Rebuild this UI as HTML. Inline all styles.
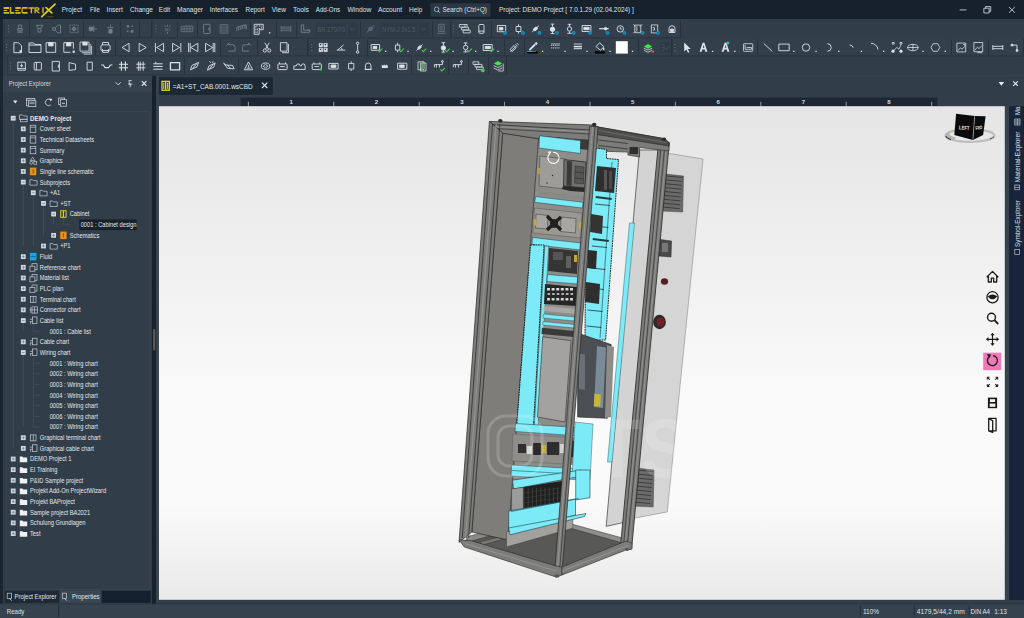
<!DOCTYPE html>
<html><head><meta charset="utf-8"><style>
html,body{margin:0;padding:0;width:1024px;height:618px;overflow:hidden;background:#313d49}
svg{display:block;font-family:"Liberation Sans",sans-serif}
</style></head><body>
<svg width="1024" height="618" viewBox="0 0 1024 618">
<rect x="0" y="0" width="1024" height="618" fill="#313d49" />
<rect x="0" y="0" width="1024" height="19" fill="#17212c" />
<rect x="0" y="19" width="3" height="599" fill="#1c2631" />
<g fill="#d4bd16">
<path d="M3.6,7h5.4v2h-5.4zM3.6,9.9h3.4v1.1h-3.4zM3.6,12h5.4v1.7h-5.4z"/>
<path d="M9.8,7h1.4v5h3.1v1.7h-4.5z"/>
<path d="M15.3,7h5.4v2h-5.4zM15.3,9.9h3.4v1.1h-3.4zM15.3,12h5.4v1.7h-5.4z"/>
<path d="M23.2,7h4.3v1.7h-4h-0.8v3.3h4.8v1.7h-4.3a1.9,1.9 0 0 1 -1.7,-1.9v-2.9a1.9,1.9 0 0 1 1.7,-1.9z"/>
<path d="M28.5,7.2h5.5v1.5h-1.9v4.6h-1.4v-4.6h-2.2z"/>
<path d="M34.4,7.2h3.3a1.7,1.7 0 0 1 0,3.6h-0.3l2.9,2.5h-2l-2.6,-2.5v2.5h-1.3zM35.7,8.5v1.1h1.9a0.55,0.55 0 0 0 0,-1.1z"/>
<path d="M42.3,7.2h1.4v6.1h-1.4z"/>
</g>
<path d="M55,4.2L41.8,16.7M46,7.6L51.8,12.8" stroke="#e2cb10" stroke-width="1.8" stroke-linecap="round"/>
<rect x="47.4" y="16.2" width="6" height="1" fill="#5a5220"/>
<text x="61.80" y="12.10" font-size="7.4" fill="#dfe4e9" textLength="20.20" lengthAdjust="spacingAndGlyphs" >Project</text>
<text x="90.00" y="12.10" font-size="7.4" fill="#dfe4e9" textLength="9.80" lengthAdjust="spacingAndGlyphs" >File</text>
<text x="106.60" y="12.10" font-size="7.4" fill="#dfe4e9" textLength="16.10" lengthAdjust="spacingAndGlyphs" >Insert</text>
<text x="130.00" y="12.10" font-size="7.4" fill="#dfe4e9" textLength="23.00" lengthAdjust="spacingAndGlyphs" >Change</text>
<text x="158.80" y="12.10" font-size="7.4" fill="#dfe4e9" textLength="11.20" lengthAdjust="spacingAndGlyphs" >Edit</text>
<text x="177.00" y="12.10" font-size="7.4" fill="#dfe4e9" textLength="26.00" lengthAdjust="spacingAndGlyphs" >Manager</text>
<text x="209.80" y="12.10" font-size="7.4" fill="#dfe4e9" textLength="28.10" lengthAdjust="spacingAndGlyphs" >Interfaces</text>
<text x="245.50" y="12.10" font-size="7.4" fill="#dfe4e9" textLength="19.30" lengthAdjust="spacingAndGlyphs" >Report</text>
<text x="271.80" y="12.10" font-size="7.4" fill="#dfe4e9" textLength="14.10" lengthAdjust="spacingAndGlyphs" >View</text>
<text x="293.10" y="12.10" font-size="7.4" fill="#dfe4e9" textLength="15.90" lengthAdjust="spacingAndGlyphs" >Tools</text>
<text x="315.80" y="12.10" font-size="7.4" fill="#dfe4e9" textLength="24.40" lengthAdjust="spacingAndGlyphs" >Add-Ons</text>
<text x="347.40" y="12.10" font-size="7.4" fill="#dfe4e9" textLength="23.90" lengthAdjust="spacingAndGlyphs" >Window</text>
<text x="378.00" y="12.10" font-size="7.4" fill="#dfe4e9" textLength="24.00" lengthAdjust="spacingAndGlyphs" >Account</text>
<text x="409.00" y="12.10" font-size="7.4" fill="#dfe4e9" textLength="13.20" lengthAdjust="spacingAndGlyphs" >Help</text>
<rect x="430.4" y="3.2" width="60.1" height="13.6" fill="#2b3744" rx="1"/>
<circle cx="436.6" cy="9.3" r="2.3" fill="none" stroke="#c7ced5" stroke-width="0.7"/>
<line x1="438.2" y1="11" x2="439.8" y2="12.8" stroke="#c7ced5" stroke-width="0.8" />
<text x="442.60" y="12.00" font-size="7.2" fill="#dfe4e9" textLength="44.30" lengthAdjust="spacingAndGlyphs" >Search (Ctrl+Q)</text>
<text x="499.00" y="12.10" font-size="7.4" fill="#dfe4e9" textLength="134.80" lengthAdjust="spacingAndGlyphs" >Project: DEMO Project  [ 7.0.1.29 (02.04.2024) ]</text>
<line x1="959.7" y1="9.9" x2="966.3" y2="9.9" stroke="#c9cfd5" stroke-width="0.9" />
<path d="M983.9,8.2h5.2v4.8h-5.2z M985.6,8.2v-1.6h5.1v4.8h-1.6" fill="none" stroke="#c9cfd5" stroke-width="0.9"/>
<path d="M1009,7l5.8,5.7M1014.8,7l-5.8,5.7" stroke="#c9cfd5" stroke-width="0.9"/>
<rect x="3" y="19" width="1021" height="57" fill="#313d49" />
<rect x="4" y="20" width="148" height="18.5" fill="#333f4b" />
<line x1="151.5" y1="20" x2="151.5" y2="38.5" stroke="#27323d" stroke-width="1" />
<line x1="4" y1="38.0" x2="152" y2="38.0" stroke="#27323d" stroke-width="1" />
<line x1="4.5" y1="20" x2="4.5" y2="38.5" stroke="#2d3843" stroke-width="1" />
<rect x="152" y="20" width="299" height="18.5" fill="#333f4b" />
<line x1="450.5" y1="20" x2="450.5" y2="38.5" stroke="#27323d" stroke-width="1" />
<line x1="152" y1="38.0" x2="451" y2="38.0" stroke="#27323d" stroke-width="1" />
<line x1="152.5" y1="20" x2="152.5" y2="38.5" stroke="#2d3843" stroke-width="1" />
<rect x="451" y="20" width="230" height="18.5" fill="#333f4b" />
<line x1="680.5" y1="20" x2="680.5" y2="38.5" stroke="#27323d" stroke-width="1" />
<line x1="451" y1="38.0" x2="681" y2="38.0" stroke="#27323d" stroke-width="1" />
<line x1="451.5" y1="20" x2="451.5" y2="38.5" stroke="#2d3843" stroke-width="1" />
<rect x="8.1" y="25.4" width="1" height="1" fill="#6b7681" />
<rect x="8.1" y="28.4" width="1" height="1" fill="#6b7681" />
<rect x="8.1" y="31.4" width="1" height="1" fill="#6b7681" />
<rect x="155.5" y="25.4" width="1" height="1" fill="#6b7681" />
<rect x="155.5" y="28.4" width="1" height="1" fill="#6b7681" />
<rect x="155.5" y="31.4" width="1" height="1" fill="#6b7681" />
<rect x="452.7" y="25.4" width="1" height="1" fill="#6b7681" />
<rect x="452.7" y="28.4" width="1" height="1" fill="#6b7681" />
<rect x="452.7" y="31.4" width="1" height="1" fill="#6b7681" />
<line x1="29.5" y1="21" x2="29.5" y2="37.5" stroke="#27323d" stroke-width="1" />
<line x1="83.5" y1="21" x2="83.5" y2="37.5" stroke="#27323d" stroke-width="1" />
<line x1="120.5" y1="21" x2="120.5" y2="37.5" stroke="#27323d" stroke-width="1" />
<line x1="139.5" y1="21" x2="139.5" y2="37.5" stroke="#27323d" stroke-width="1" />
<line x1="177.5" y1="21" x2="177.5" y2="37.5" stroke="#27323d" stroke-width="1" />
<line x1="197.5" y1="21" x2="197.5" y2="37.5" stroke="#27323d" stroke-width="1" />
<line x1="250.5" y1="21" x2="250.5" y2="37.5" stroke="#27323d" stroke-width="1" />
<line x1="276.5" y1="21" x2="276.5" y2="37.5" stroke="#27323d" stroke-width="1" />
<line x1="296.5" y1="21" x2="296.5" y2="37.5" stroke="#27323d" stroke-width="1" />
<line x1="360.5" y1="21" x2="360.5" y2="37.5" stroke="#27323d" stroke-width="1" />
<line x1="432.5" y1="21" x2="432.5" y2="37.5" stroke="#27323d" stroke-width="1" />
<line x1="491.5" y1="21" x2="491.5" y2="37.5" stroke="#27323d" stroke-width="1" />
<rect x="4" y="38.5" width="304" height="18.0" fill="#333f4b" />
<line x1="307.5" y1="38.5" x2="307.5" y2="56.5" stroke="#27323d" stroke-width="1" />
<line x1="4" y1="56.0" x2="308" y2="56.0" stroke="#27323d" stroke-width="1" />
<line x1="4.5" y1="38.5" x2="4.5" y2="56.5" stroke="#2d3843" stroke-width="1" />
<rect x="308" y="38.5" width="364" height="18.0" fill="#333f4b" />
<line x1="671.5" y1="38.5" x2="671.5" y2="56.5" stroke="#27323d" stroke-width="1" />
<line x1="308" y1="56.0" x2="672" y2="56.0" stroke="#27323d" stroke-width="1" />
<line x1="308.5" y1="38.5" x2="308.5" y2="56.5" stroke="#2d3843" stroke-width="1" />
<rect x="672" y="38.5" width="352" height="18.0" fill="#333f4b" />
<line x1="1023.5" y1="38.5" x2="1023.5" y2="56.5" stroke="#27323d" stroke-width="1" />
<line x1="672" y1="56.0" x2="1024" y2="56.0" stroke="#27323d" stroke-width="1" />
<line x1="672.5" y1="38.5" x2="672.5" y2="56.5" stroke="#2d3843" stroke-width="1" />
<rect x="6.0" y="44.0" width="1" height="1" fill="#6b7681" />
<rect x="6.0" y="47.0" width="1" height="1" fill="#6b7681" />
<rect x="6.0" y="50.0" width="1" height="1" fill="#6b7681" />
<rect x="311.2" y="44.0" width="1" height="1" fill="#6b7681" />
<rect x="311.2" y="47.0" width="1" height="1" fill="#6b7681" />
<rect x="311.2" y="50.0" width="1" height="1" fill="#6b7681" />
<rect x="674.5" y="44.0" width="1" height="1" fill="#6b7681" />
<rect x="674.5" y="47.0" width="1" height="1" fill="#6b7681" />
<rect x="674.5" y="50.0" width="1" height="1" fill="#6b7681" />
<line x1="95.5" y1="39.5" x2="95.5" y2="55.5" stroke="#27323d" stroke-width="1" />
<line x1="115.5" y1="39.5" x2="115.5" y2="55.5" stroke="#27323d" stroke-width="1" />
<line x1="220.5" y1="39.5" x2="220.5" y2="55.5" stroke="#27323d" stroke-width="1" />
<line x1="257.5" y1="39.5" x2="257.5" y2="55.5" stroke="#27323d" stroke-width="1" />
<line x1="367.5" y1="39.5" x2="367.5" y2="55.5" stroke="#27323d" stroke-width="1" />
<line x1="504.5" y1="39.5" x2="504.5" y2="55.5" stroke="#27323d" stroke-width="1" />
<line x1="524.5" y1="39.5" x2="524.5" y2="55.5" stroke="#27323d" stroke-width="1" />
<line x1="638.5" y1="39.5" x2="638.5" y2="55.5" stroke="#27323d" stroke-width="1" />
<line x1="757.5" y1="39.5" x2="757.5" y2="55.5" stroke="#27323d" stroke-width="1" />
<line x1="951.5" y1="39.5" x2="951.5" y2="55.5" stroke="#27323d" stroke-width="1" />
<line x1="988.5" y1="39.5" x2="988.5" y2="55.5" stroke="#27323d" stroke-width="1" />
<rect x="7" y="56.5" width="500" height="19.0" fill="#333f4b" />
<line x1="506.5" y1="56.5" x2="506.5" y2="75.5" stroke="#27323d" stroke-width="1" />
<line x1="7" y1="75.0" x2="507" y2="75.0" stroke="#27323d" stroke-width="1" />
<line x1="7.5" y1="56.5" x2="7.5" y2="75.5" stroke="#2d3843" stroke-width="1" />
<rect x="10.0" y="62.5" width="1" height="1" fill="#6b7681" />
<rect x="10.0" y="65.5" width="1" height="1" fill="#6b7681" />
<rect x="10.0" y="68.5" width="1" height="1" fill="#6b7681" />
<line x1="184.5" y1="57.5" x2="184.5" y2="74.5" stroke="#27323d" stroke-width="1" />
<line x1="238.5" y1="57.5" x2="238.5" y2="74.5" stroke="#27323d" stroke-width="1" />
<line x1="411.5" y1="57.5" x2="411.5" y2="74.5" stroke="#27323d" stroke-width="1" />
<line x1="448.5" y1="57.5" x2="448.5" y2="74.5" stroke="#27323d" stroke-width="1" />
<line x1="468.5" y1="57.5" x2="468.5" y2="74.5" stroke="#27323d" stroke-width="1" />
<line x1="488.5" y1="57.5" x2="488.5" y2="74.5" stroke="#27323d" stroke-width="1" />
<line x1="156" y1="76" x2="1024" y2="76" stroke="#3b4752" stroke-width="1" />
<rect x="156" y="76.5" width="868" height="530" fill="#313d49" />
<rect x="158.5" y="77.3" width="114.3" height="17.6" fill="#1c2834" />
<rect x="161.3" y="80.7" width="8.7" height="10.2" fill="#d9d21a" />
<rect x="162.6" y="82" width="2.4" height="7.6" fill="#2a3540" />
<rect x="166.2" y="82" width="2.4" height="7.6" fill="#2a3540" />
<rect x="163.3" y="82.7" width="1" height="6.2" fill="#d9d21a" />
<rect x="166.9" y="82.7" width="1" height="6.2" fill="#d9d21a" />
<text x="172.70" y="88.50" font-size="7.2" fill="#e6eaee" textLength="80.00" lengthAdjust="spacingAndGlyphs" >=A1+ST_CAB.0001.wsCBD</text>
<path d="M262,82.7l5.3,5.3M267.3,82.7l-5.3,5.3" stroke="#e6eaee" stroke-width="1.1"/>
<rect x="1004.8" y="76.5" width="19.2" height="530" fill="#313d49" />
<rect x="1004.8" y="106" width="4.3" height="494" fill="#36424e" />
<rect x="1009.1" y="106" width="14.9" height="494" fill="#17243a" />
<path d="M998.6,82.1h5.6l-2.8,3.6z" fill="#e6eaee"/>
<path d="M1013.2,81.3l4.6,4.6M1017.8,81.3l-4.6,4.6" stroke="#e6eaee" stroke-width="1.1"/>
<rect x="240.8" y="97.6" width="696.5" height="8.6" fill="#1c2733" />
<line x1="248.4" y1="101.8" x2="248.4" y2="106.2" stroke="#c9d0d6" stroke-width="0.7" />
<line x1="333.8" y1="101.8" x2="333.8" y2="106.2" stroke="#c9d0d6" stroke-width="0.7" />
<line x1="419.20000000000005" y1="101.8" x2="419.20000000000005" y2="106.2" stroke="#c9d0d6" stroke-width="0.7" />
<line x1="504.6" y1="101.8" x2="504.6" y2="106.2" stroke="#c9d0d6" stroke-width="0.7" />
<line x1="590.0" y1="101.8" x2="590.0" y2="106.2" stroke="#c9d0d6" stroke-width="0.7" />
<line x1="675.4" y1="101.8" x2="675.4" y2="106.2" stroke="#c9d0d6" stroke-width="0.7" />
<line x1="760.8000000000001" y1="101.8" x2="760.8000000000001" y2="106.2" stroke="#c9d0d6" stroke-width="0.7" />
<line x1="846.2" y1="101.8" x2="846.2" y2="106.2" stroke="#c9d0d6" stroke-width="0.7" />
<line x1="931.6" y1="101.8" x2="931.6" y2="106.2" stroke="#c9d0d6" stroke-width="0.7" />
<text x="291.10" y="104.20" font-size="6" fill="#d6dce2" font-weight="bold" text-anchor="middle" >1</text>
<text x="376.50" y="104.20" font-size="6" fill="#d6dce2" font-weight="bold" text-anchor="middle" >2</text>
<text x="461.90" y="104.20" font-size="6" fill="#d6dce2" font-weight="bold" text-anchor="middle" >3</text>
<text x="547.30" y="104.20" font-size="6" fill="#d6dce2" font-weight="bold" text-anchor="middle" >4</text>
<text x="632.70" y="104.20" font-size="6" fill="#d6dce2" font-weight="bold" text-anchor="middle" >5</text>
<text x="718.10" y="104.20" font-size="6" fill="#d6dce2" font-weight="bold" text-anchor="middle" >6</text>
<text x="803.50" y="104.20" font-size="6" fill="#d6dce2" font-weight="bold" text-anchor="middle" >7</text>
<text x="888.90" y="104.20" font-size="6" fill="#d6dce2" font-weight="bold" text-anchor="middle" >8</text>
<defs><linearGradient id="bg3d" x1="0" y1="0" x2="0" y2="1"><stop offset="0" stop-color="#e5e5e5"/><stop offset="0.12" stop-color="#e9e9e9"/><stop offset="0.4" stop-color="#f3f3f3"/><stop offset="0.6" stop-color="#fafafa"/><stop offset="0.8" stop-color="#fafafa"/><stop offset="0.9" stop-color="#f2f2f2"/><stop offset="1" stop-color="#eaeaea"/></linearGradient></defs>
<rect x="158.8" y="106.2" width="846" height="493.6" fill="url(#bg3d)" />
<rect x="152" y="76" width="4.2" height="528" fill="#17222e" />
<rect x="153" y="329" width="2.3" height="21.5" fill="#5a5850" rx="0.8"/>
<rect x="156.2" y="76" width="2.6" height="528" fill="#38444f" />
<rect x="0" y="603.8" width="1024" height="14.2" fill="#36424e" />
<line x1="0" y1="603.8" x2="1024" y2="603.8" stroke="#253039" stroke-width="0.8" />
<text x="6.80" y="613.60" font-size="7.2" fill="#dfe4e9" textLength="17.60" lengthAdjust="spacingAndGlyphs" >Ready</text>
<line x1="58.6" y1="605" x2="58.6" y2="617" stroke="#222c37" stroke-width="0.9" />
<line x1="860.3" y1="605" x2="860.3" y2="617" stroke="#222c37" stroke-width="0.9" />
<line x1="914.3" y1="605" x2="914.3" y2="617" stroke="#222c37" stroke-width="0.9" />
<line x1="969.2" y1="605" x2="969.2" y2="617" stroke="#222c37" stroke-width="0.9" />
<text x="863.00" y="613.60" font-size="7.2" fill="#dfe4e9" textLength="15.90" lengthAdjust="spacingAndGlyphs" >110%</text>
<text x="916.70" y="613.60" font-size="7.2" fill="#dfe4e9" textLength="48.10" lengthAdjust="spacingAndGlyphs" >4179,5/44,2 mm</text>
<text x="970.50" y="613.60" font-size="7.2" fill="#dfe4e9" textLength="19.50" lengthAdjust="spacingAndGlyphs" >DIN A4</text>
<text x="994.20" y="613.60" font-size="7.2" fill="#dfe4e9" textLength="12.80" lengthAdjust="spacingAndGlyphs" >1:13</text>
<rect x="3" y="75.5" width="149" height="528.3" fill="#313d49" />
<rect x="3" y="75.5" width="149" height="16.5" fill="#36424e" />
<text x="8.70" y="85.80" font-size="7" fill="#d3d9df" textLength="42.30" lengthAdjust="spacingAndGlyphs" >Project Explorer</text>
<path d="M115.6,82.3l2.6,2.6l2.6,-2.6" fill="none" stroke="#e0e5ea" stroke-width="0.9"/>
<path d="M128.6,80.6h3.2M129.2,80.6v3.5h2M128.2,84.1h4.2M130.2,84.1v3.2" fill="none" stroke="#e0e5ea" stroke-width="0.8"/>
<path d="M141.8,81.2l4.6,4.6M146.4,81.2l-4.6,4.6" stroke="#eef1f4" stroke-width="1.1"/>
<path d="M13.1,100.6h4.4l-2.2,3z" fill="#e6eaee"/>
<g fill="none" stroke="#c8ced4" stroke-width="0.8"><rect x="26.4" y="98.6" width="8.4" height="7.2"/><path d="M26.4,100.2h8.4"/><rect x="28.6" y="100.8" width="7.2" height="5.8" fill="#313d49"/></g>
<rect x="29.5" y="102.2" width="5.2" height="2" fill="#8a939c"/>
<path d="M50.4,99.6 A3.3,3.3 0 1 0 50.8,104.8" fill="none" stroke="#c8ced4" stroke-width="0.9"/><path d="M49.2,98.6l3.2,0.4l-1.6,2.6z" fill="#e0e5ea"/>
<g fill="none" stroke="#c8ced4" stroke-width="0.8"><rect x="58.6" y="98" width="6" height="6.6"/><rect x="60.4" y="99.6" width="6" height="6.6" fill="#313d49"/></g><rect x="62" y="102.8" width="3" height="1" fill="#c8ced4"/>
<rect x="6.8" y="111.4" width="142.8" height="478" fill="#313d49" stroke="#3b4753" stroke-width="0.8"/>
<rect x="150" y="106" width="2" height="496" fill="#313d49" />
<line x1="13.2" y1="118.2" x2="13.2" y2="448.35" stroke="#4f5a65" stroke-width="0.6" />
<line x1="23.3" y1="182.10000000000002" x2="23.3" y2="246.0" stroke="#4f5a65" stroke-width="0.6" />
<line x1="33.3" y1="192.75" x2="33.3" y2="246.0" stroke="#4f5a65" stroke-width="0.6" />
<line x1="43.5" y1="203.4" x2="43.5" y2="235.35000000000002" stroke="#4f5a65" stroke-width="0.6" />
<line x1="53.6" y1="214.05" x2="53.6" y2="224.7" stroke="#4f5a65" stroke-width="0.6" />
<line x1="23.3" y1="320.55" x2="23.3" y2="331.2" stroke="#4f5a65" stroke-width="0.6" />
<line x1="23.3" y1="352.5" x2="23.3" y2="427.05" stroke="#4f5a65" stroke-width="0.6" />
<line x1="63.6" y1="224.7" x2="70.6" y2="224.7" stroke="#4f5a65" stroke-width="0.5" />
<line x1="63.6" y1="217.05" x2="63.6" y2="224.7" stroke="#4f5a65" stroke-width="0.5" />
<line x1="33.3" y1="331.2" x2="40.3" y2="331.2" stroke="#4f5a65" stroke-width="0.5" />
<line x1="33.3" y1="363.15000000000003" x2="40.3" y2="363.15000000000003" stroke="#4f5a65" stroke-width="0.5" />
<line x1="33.3" y1="373.8" x2="40.3" y2="373.8" stroke="#4f5a65" stroke-width="0.5" />
<line x1="33.3" y1="384.45" x2="40.3" y2="384.45" stroke="#4f5a65" stroke-width="0.5" />
<line x1="33.3" y1="395.1" x2="40.3" y2="395.1" stroke="#4f5a65" stroke-width="0.5" />
<line x1="33.3" y1="405.75" x2="40.3" y2="405.75" stroke="#4f5a65" stroke-width="0.5" />
<line x1="33.3" y1="416.4" x2="40.3" y2="416.4" stroke="#4f5a65" stroke-width="0.5" />
<line x1="33.3" y1="427.05" x2="40.3" y2="427.05" stroke="#4f5a65" stroke-width="0.5" />
<line x1="33.3" y1="355.5" x2="33.3" y2="427.05" stroke="#4f5a65" stroke-width="0.5" />
<line x1="33.3" y1="323.55" x2="33.3" y2="331.2" stroke="#4f5a65" stroke-width="0.5" />
<line x1="15.6" y1="118.2" x2="18.7" y2="118.2" stroke="#4f5a65" stroke-width="0.5" stroke-dasharray="0.8,0.8"/>
<rect x="10.799999999999999" y="115.8" width="4.8" height="4.8" fill="#d5dade" />
<path d="M11.799999999999999,118.2h2.8" stroke="#4a6a8a" stroke-width="0.6"/>
<g fill="none" stroke="#c8ced4" stroke-width="0.7"><path d="M19.5,114.9h3l1,1h3.6v3.5h-7.6z"/><rect x="20.5" y="119.2" width="6.6" height="2.6"/></g>
<text x="30.00" y="120.60" font-size="6.9" fill="#e4e8ec" textLength="41.41" lengthAdjust="spacingAndGlyphs" font-weight="bold" >DEMO Project</text>
<line x1="25.7" y1="128.85" x2="28.8" y2="128.85" stroke="#4f5a65" stroke-width="0.5" stroke-dasharray="0.8,0.8"/>
<rect x="20.900000000000002" y="126.44999999999999" width="4.8" height="4.8" fill="#d5dade" />
<path d="M21.900000000000002,128.85h2.8" stroke="#4a6a8a" stroke-width="0.6"/>
<path d="M23.3,127.44999999999999v2.8" stroke="#4a6a8a" stroke-width="0.6"/>
<g fill="none" stroke="#c8ced4" stroke-width="0.7"><rect x="30.200000000000003" y="125.25" width="5.6" height="7.2"/><path d="M30.200000000000003,127.25h5.6"/></g>
<text x="39.80" y="131.25" font-size="6.9" fill="#e4e8ec" textLength="30.88" lengthAdjust="spacingAndGlyphs" >Cover sheet</text>
<line x1="25.7" y1="139.5" x2="28.8" y2="139.5" stroke="#4f5a65" stroke-width="0.5" stroke-dasharray="0.8,0.8"/>
<rect x="20.900000000000002" y="137.1" width="4.8" height="4.8" fill="#d5dade" />
<path d="M21.900000000000002,139.5h2.8" stroke="#4a6a8a" stroke-width="0.6"/>
<path d="M23.3,138.1v2.8" stroke="#4a6a8a" stroke-width="0.6"/>
<g fill="none" stroke="#c8ced4" stroke-width="0.7"><rect x="30.200000000000003" y="135.9" width="5.6" height="7.2"/><path d="M30.200000000000003,137.9h5.6"/></g>
<text x="39.80" y="141.90" font-size="6.9" fill="#e4e8ec" textLength="54.44" lengthAdjust="spacingAndGlyphs" >Technical Datasheets</text>
<line x1="25.7" y1="150.15" x2="28.8" y2="150.15" stroke="#4f5a65" stroke-width="0.5" stroke-dasharray="0.8,0.8"/>
<rect x="20.900000000000002" y="147.75" width="4.8" height="4.8" fill="#d5dade" />
<path d="M21.900000000000002,150.15h2.8" stroke="#4a6a8a" stroke-width="0.6"/>
<path d="M23.3,148.75v2.8" stroke="#4a6a8a" stroke-width="0.6"/>
<g fill="none" stroke="#c8ced4" stroke-width="0.7"><rect x="30.200000000000003" y="146.55" width="5.6" height="7.2"/><path d="M30.200000000000003,148.55h5.6"/></g>
<text x="39.80" y="152.55" font-size="6.9" fill="#e4e8ec" textLength="24.50" lengthAdjust="spacingAndGlyphs" >Summary</text>
<line x1="25.7" y1="160.8" x2="28.8" y2="160.8" stroke="#4f5a65" stroke-width="0.5" stroke-dasharray="0.8,0.8"/>
<rect x="20.900000000000002" y="158.4" width="4.8" height="4.8" fill="#d5dade" />
<path d="M21.900000000000002,160.8h2.8" stroke="#4a6a8a" stroke-width="0.6"/>
<path d="M23.3,159.4v2.8" stroke="#4a6a8a" stroke-width="0.6"/>
<g fill="none" stroke="#c8ced4" stroke-width="0.7"><path d="M32.6,157.20000000000002l-2.2,3.4h4.4z"/><circle cx="31.200000000000003" cy="162.8" r="1.4"/><rect x="33.9" y="161.4" width="2.8" height="2.8"/></g>
<text x="39.80" y="163.20" font-size="6.9" fill="#e4e8ec" textLength="22.92" lengthAdjust="spacingAndGlyphs" >Graphics</text>
<line x1="25.7" y1="171.45" x2="28.8" y2="171.45" stroke="#4f5a65" stroke-width="0.5" stroke-dasharray="0.8,0.8"/>
<rect x="20.900000000000002" y="169.04999999999998" width="4.8" height="4.8" fill="#d5dade" />
<path d="M21.900000000000002,171.45h2.8" stroke="#4a6a8a" stroke-width="0.6"/>
<path d="M23.3,170.04999999999998v2.8" stroke="#4a6a8a" stroke-width="0.6"/>
<rect x="29.900000000000002" y="167.65" width="6.4" height="7.6" fill="#e8901a" />
<path d="M33.1,169.35v4" stroke="#5a3a10" stroke-width="0.7"/>
<text x="39.80" y="173.85" font-size="6.9" fill="#e4e8ec" textLength="53.80" lengthAdjust="spacingAndGlyphs" >Single line schematic</text>
<line x1="25.7" y1="182.10000000000002" x2="28.8" y2="182.10000000000002" stroke="#4f5a65" stroke-width="0.5" stroke-dasharray="0.8,0.8"/>
<rect x="20.900000000000002" y="179.70000000000002" width="4.8" height="4.8" fill="#d5dade" />
<path d="M21.900000000000002,182.10000000000002h2.8" stroke="#4a6a8a" stroke-width="0.6"/>
<path d="M29.900000000000002,179.70000000000002h2.6l0.8,0.9h3.8v4.6h-7.2z" fill="none" stroke="#c8ced4" stroke-width="0.7"/>
<text x="39.80" y="184.50" font-size="6.9" fill="#e4e8ec" textLength="30.24" lengthAdjust="spacingAndGlyphs" >Subprojects</text>
<line x1="35.699999999999996" y1="192.75" x2="38.8" y2="192.75" stroke="#4f5a65" stroke-width="0.5" stroke-dasharray="0.8,0.8"/>
<rect x="30.9" y="190.35" width="4.8" height="4.8" fill="#d5dade" />
<path d="M31.9,192.75h2.8" stroke="#4a6a8a" stroke-width="0.6"/>
<path d="M39.89999999999999,190.35h2.6l0.8,0.9h3.8v4.6h-7.2z" fill="none" stroke="#c8ced4" stroke-width="0.7"/>
<text x="49.90" y="195.15" font-size="6.9" fill="#e4e8ec" textLength="10.35" lengthAdjust="spacingAndGlyphs" >+A1</text>
<line x1="45.9" y1="203.4" x2="49.0" y2="203.4" stroke="#4f5a65" stroke-width="0.5" stroke-dasharray="0.8,0.8"/>
<rect x="41.1" y="201.0" width="4.8" height="4.8" fill="#d5dade" />
<path d="M42.1,203.4h2.8" stroke="#4a6a8a" stroke-width="0.6"/>
<path d="M50.099999999999994,201.0h2.6l0.8,0.9h3.8v4.6h-7.2z" fill="none" stroke="#c8ced4" stroke-width="0.7"/>
<text x="60.20" y="205.80" font-size="6.9" fill="#e4e8ec" textLength="10.66" lengthAdjust="spacingAndGlyphs" >+ST</text>
<line x1="56.0" y1="214.05" x2="59.1" y2="214.05" stroke="#4f5a65" stroke-width="0.5" stroke-dasharray="0.8,0.8"/>
<rect x="51.2" y="211.65" width="4.8" height="4.8" fill="#d5dade" />
<path d="M52.2,214.05h2.8" stroke="#4a6a8a" stroke-width="0.6"/>
<rect x="60.199999999999996" y="210.25000000000003" width="6.4" height="7.6" fill="#d9d21a" />
<rect x="61.199999999999996" y="211.25000000000003" width="1.6" height="5.6" fill="#3a4030" />
<rect x="64.0" y="211.25000000000003" width="1.6" height="5.6" fill="#3a4030" />
<text x="69.70" y="216.45" font-size="6.9" fill="#e4e8ec" textLength="19.74" lengthAdjust="spacingAndGlyphs" >Cabinet</text>
<rect x="79.3" y="219.39999999999998" width="57.4" height="10.7" fill="#18222c" />
<text x="80.70" y="227.10" font-size="6.9" fill="#e4e8ec" textLength="55.72" lengthAdjust="spacingAndGlyphs" >0001 : Cabinet design</text>
<line x1="56.0" y1="235.35000000000002" x2="59.1" y2="235.35000000000002" stroke="#4f5a65" stroke-width="0.5" stroke-dasharray="0.8,0.8"/>
<rect x="51.2" y="232.95000000000002" width="4.8" height="4.8" fill="#d5dade" />
<path d="M52.2,235.35000000000002h2.8" stroke="#4a6a8a" stroke-width="0.6"/>
<path d="M53.6,233.95000000000002v2.8" stroke="#4a6a8a" stroke-width="0.6"/>
<rect x="60.199999999999996" y="231.55000000000004" width="6.4" height="7.6" fill="#e8901a" />
<path d="M63.4,233.25000000000003v4" stroke="#5a3a10" stroke-width="0.7"/>
<text x="69.70" y="237.75" font-size="6.9" fill="#e4e8ec" textLength="29.60" lengthAdjust="spacingAndGlyphs" >Schematics</text>
<line x1="45.9" y1="246.0" x2="49.0" y2="246.0" stroke="#4f5a65" stroke-width="0.5" stroke-dasharray="0.8,0.8"/>
<rect x="41.1" y="243.6" width="4.8" height="4.8" fill="#d5dade" />
<path d="M42.1,246.0h2.8" stroke="#4a6a8a" stroke-width="0.6"/>
<path d="M43.5,244.6v2.8" stroke="#4a6a8a" stroke-width="0.6"/>
<path d="M50.099999999999994,243.6h2.6l0.8,0.9h3.8v4.6h-7.2z" fill="none" stroke="#c8ced4" stroke-width="0.7"/>
<text x="60.20" y="248.40" font-size="6.9" fill="#e4e8ec" textLength="10.35" lengthAdjust="spacingAndGlyphs" >+P1</text>
<line x1="25.7" y1="256.65000000000003" x2="28.8" y2="256.65000000000003" stroke="#4f5a65" stroke-width="0.5" stroke-dasharray="0.8,0.8"/>
<rect x="20.900000000000002" y="254.25000000000003" width="4.8" height="4.8" fill="#d5dade" />
<path d="M21.900000000000002,256.65000000000003h2.8" stroke="#4a6a8a" stroke-width="0.6"/>
<path d="M23.3,255.25000000000003v2.8" stroke="#4a6a8a" stroke-width="0.6"/>
<rect x="29.900000000000002" y="252.85000000000005" width="6.6" height="7.6" fill="#1aa6de" />
<path d="M30.8,256.55000000000007h4.8" stroke="#0a4a70" stroke-width="0.7"/>
<text x="39.80" y="259.05" font-size="6.9" fill="#e4e8ec" textLength="12.41" lengthAdjust="spacingAndGlyphs" >Fluid</text>
<line x1="25.7" y1="267.3" x2="28.8" y2="267.3" stroke="#4f5a65" stroke-width="0.5" stroke-dasharray="0.8,0.8"/>
<rect x="20.900000000000002" y="264.90000000000003" width="4.8" height="4.8" fill="#d5dade" />
<path d="M21.900000000000002,267.3h2.8" stroke="#4a6a8a" stroke-width="0.6"/>
<path d="M23.3,265.90000000000003v2.8" stroke="#4a6a8a" stroke-width="0.6"/>
<g fill="none" stroke="#c8ced4" stroke-width="0.7"><rect x="32.0" y="263.7" width="5" height="6"/><rect x="29.900000000000002" y="266.2" width="5" height="5" fill="#313d49"/></g>
<text x="39.80" y="269.70" font-size="6.9" fill="#e4e8ec" textLength="40.75" lengthAdjust="spacingAndGlyphs" >Reference chart</text>
<line x1="25.7" y1="277.95" x2="28.8" y2="277.95" stroke="#4f5a65" stroke-width="0.5" stroke-dasharray="0.8,0.8"/>
<rect x="20.900000000000002" y="275.55" width="4.8" height="4.8" fill="#d5dade" />
<path d="M21.900000000000002,277.95h2.8" stroke="#4a6a8a" stroke-width="0.6"/>
<path d="M23.3,276.55v2.8" stroke="#4a6a8a" stroke-width="0.6"/>
<g fill="none" stroke="#c8ced4" stroke-width="0.7"><rect x="32.0" y="274.34999999999997" width="5" height="6"/><rect x="29.900000000000002" y="276.84999999999997" width="5" height="5" fill="#313d49"/></g>
<text x="39.80" y="280.35" font-size="6.9" fill="#e4e8ec" textLength="28.96" lengthAdjust="spacingAndGlyphs" >Material list</text>
<line x1="25.7" y1="288.6" x2="28.8" y2="288.6" stroke="#4f5a65" stroke-width="0.5" stroke-dasharray="0.8,0.8"/>
<rect x="20.900000000000002" y="286.20000000000005" width="4.8" height="4.8" fill="#d5dade" />
<path d="M21.900000000000002,288.6h2.8" stroke="#4a6a8a" stroke-width="0.6"/>
<path d="M23.3,287.20000000000005v2.8" stroke="#4a6a8a" stroke-width="0.6"/>
<g fill="none" stroke="#c8ced4" stroke-width="0.7"><rect x="32.0" y="285.0" width="5" height="6"/><rect x="29.900000000000002" y="287.5" width="5" height="5" fill="#313d49"/></g>
<text x="39.80" y="291.00" font-size="6.9" fill="#e4e8ec" textLength="23.56" lengthAdjust="spacingAndGlyphs" >PLC plan</text>
<line x1="25.7" y1="299.25" x2="28.8" y2="299.25" stroke="#4f5a65" stroke-width="0.5" stroke-dasharray="0.8,0.8"/>
<rect x="20.900000000000002" y="296.85" width="4.8" height="4.8" fill="#d5dade" />
<path d="M21.900000000000002,299.25h2.8" stroke="#4a6a8a" stroke-width="0.6"/>
<path d="M23.3,297.85v2.8" stroke="#4a6a8a" stroke-width="0.6"/>
<g fill="none" stroke="#c8ced4" stroke-width="0.7"><rect x="30.6" y="296.45" width="5.4" height="6"/><path d="M33.300000000000004,296.45v6"/></g>
<text x="39.80" y="301.65" font-size="6.9" fill="#e4e8ec" textLength="35.96" lengthAdjust="spacingAndGlyphs" >Terminal chart</text>
<line x1="25.7" y1="309.90000000000003" x2="28.8" y2="309.90000000000003" stroke="#4f5a65" stroke-width="0.5" stroke-dasharray="0.8,0.8"/>
<rect x="20.900000000000002" y="307.50000000000006" width="4.8" height="4.8" fill="#d5dade" />
<path d="M21.900000000000002,309.90000000000003h2.8" stroke="#4a6a8a" stroke-width="0.6"/>
<path d="M23.3,308.50000000000006v2.8" stroke="#4a6a8a" stroke-width="0.6"/>
<g fill="none" stroke="#c8ced4" stroke-width="0.7"><path d="M29.6,309.90000000000003h2M30.8,307.1v6"/><rect x="32.0" y="306.90000000000003" width="5.4" height="6.2"/><path d="M32.0,309.90000000000003h5.4M34.6,306.90000000000003v6.2"/></g>
<text x="39.80" y="312.30" font-size="6.9" fill="#e4e8ec" textLength="40.75" lengthAdjust="spacingAndGlyphs" >Connector chart</text>
<line x1="25.7" y1="320.55" x2="28.8" y2="320.55" stroke="#4f5a65" stroke-width="0.5" stroke-dasharray="0.8,0.8"/>
<rect x="20.900000000000002" y="318.15000000000003" width="4.8" height="4.8" fill="#d5dade" />
<path d="M21.900000000000002,320.55h2.8" stroke="#4a6a8a" stroke-width="0.6"/>
<g fill="none" stroke="#c8ced4" stroke-width="0.7"><rect x="32.4" y="316.95" width="4.6" height="6.6"/><path d="M29.900000000000002,319.34999999999997h2.5M29.900000000000002,321.55h2.5M30.6,321.55v2.6"/></g>
<text x="39.80" y="322.95" font-size="6.9" fill="#e4e8ec" textLength="23.55" lengthAdjust="spacingAndGlyphs" >Cable list</text>
<text x="49.70" y="333.60" font-size="6.9" fill="#e4e8ec" textLength="41.07" lengthAdjust="spacingAndGlyphs" >0001 : Cable list</text>
<line x1="25.7" y1="341.85" x2="28.8" y2="341.85" stroke="#4f5a65" stroke-width="0.5" stroke-dasharray="0.8,0.8"/>
<rect x="20.900000000000002" y="339.45000000000005" width="4.8" height="4.8" fill="#d5dade" />
<path d="M21.900000000000002,341.85h2.8" stroke="#4a6a8a" stroke-width="0.6"/>
<path d="M23.3,340.45000000000005v2.8" stroke="#4a6a8a" stroke-width="0.6"/>
<g fill="none" stroke="#c8ced4" stroke-width="0.7"><rect x="32.4" y="338.25" width="4.6" height="6.6"/><path d="M29.900000000000002,340.65h2.5M29.900000000000002,342.85h2.5M30.6,342.85v2.6"/></g>
<text x="39.80" y="344.25" font-size="6.9" fill="#e4e8ec" textLength="29.29" lengthAdjust="spacingAndGlyphs" >Cable chart</text>
<line x1="25.7" y1="352.5" x2="28.8" y2="352.5" stroke="#4f5a65" stroke-width="0.5" stroke-dasharray="0.8,0.8"/>
<rect x="20.900000000000002" y="350.1" width="4.8" height="4.8" fill="#d5dade" />
<path d="M21.900000000000002,352.5h2.8" stroke="#4a6a8a" stroke-width="0.6"/>
<g fill="none" stroke="#c8ced4" stroke-width="0.7"><rect x="32.4" y="348.9" width="4.6" height="6.6"/><path d="M29.900000000000002,351.29999999999995h2.5M29.900000000000002,353.5h2.5M30.6,353.5v2.6"/></g>
<text x="39.80" y="354.90" font-size="6.9" fill="#e4e8ec" textLength="30.55" lengthAdjust="spacingAndGlyphs" >Wiring chart</text>
<text x="49.70" y="365.55" font-size="6.9" fill="#e4e8ec" textLength="48.06" lengthAdjust="spacingAndGlyphs" >0001 : Wiring chart</text>
<text x="49.70" y="376.20" font-size="6.9" fill="#e4e8ec" textLength="48.06" lengthAdjust="spacingAndGlyphs" >0002 : Wiring chart</text>
<text x="49.70" y="386.85" font-size="6.9" fill="#e4e8ec" textLength="48.06" lengthAdjust="spacingAndGlyphs" >0003 : Wiring chart</text>
<text x="49.70" y="397.50" font-size="6.9" fill="#e4e8ec" textLength="48.06" lengthAdjust="spacingAndGlyphs" >0004 : Wiring chart</text>
<text x="49.70" y="408.15" font-size="6.9" fill="#e4e8ec" textLength="48.06" lengthAdjust="spacingAndGlyphs" >0005 : Wiring chart</text>
<text x="49.70" y="418.80" font-size="6.9" fill="#e4e8ec" textLength="48.06" lengthAdjust="spacingAndGlyphs" >0006 : Wiring chart</text>
<text x="49.70" y="429.45" font-size="6.9" fill="#e4e8ec" textLength="48.06" lengthAdjust="spacingAndGlyphs" >0007 : Wiring chart</text>
<line x1="25.7" y1="437.7" x2="28.8" y2="437.7" stroke="#4f5a65" stroke-width="0.5" stroke-dasharray="0.8,0.8"/>
<rect x="20.900000000000002" y="435.3" width="4.8" height="4.8" fill="#d5dade" />
<path d="M21.900000000000002,437.7h2.8" stroke="#4a6a8a" stroke-width="0.6"/>
<path d="M23.3,436.3v2.8" stroke="#4a6a8a" stroke-width="0.6"/>
<g fill="none" stroke="#c8ced4" stroke-width="0.7"><rect x="30.6" y="434.9" width="5.4" height="6"/><path d="M33.300000000000004,434.9v6"/></g>
<text x="39.80" y="440.10" font-size="6.9" fill="#e4e8ec" textLength="60.79" lengthAdjust="spacingAndGlyphs" >Graphical terminal chart</text>
<line x1="25.7" y1="448.35" x2="28.8" y2="448.35" stroke="#4f5a65" stroke-width="0.5" stroke-dasharray="0.8,0.8"/>
<rect x="20.900000000000002" y="445.95000000000005" width="4.8" height="4.8" fill="#d5dade" />
<path d="M21.900000000000002,448.35h2.8" stroke="#4a6a8a" stroke-width="0.6"/>
<path d="M23.3,446.95000000000005v2.8" stroke="#4a6a8a" stroke-width="0.6"/>
<g fill="none" stroke="#c8ced4" stroke-width="0.7"><rect x="32.4" y="444.75" width="4.6" height="6.6"/><path d="M29.900000000000002,447.15h2.5M29.900000000000002,449.35h2.5M30.6,449.35v2.6"/></g>
<text x="39.80" y="450.75" font-size="6.9" fill="#e4e8ec" textLength="54.12" lengthAdjust="spacingAndGlyphs" >Graphical cable chart</text>
<line x1="15.6" y1="459.0" x2="18.7" y2="459.0" stroke="#4f5a65" stroke-width="0.5" stroke-dasharray="0.8,0.8"/>
<rect x="10.799999999999999" y="456.6" width="4.8" height="4.8" fill="#d5dade" />
<path d="M11.799999999999999,459.0h2.8" stroke="#4a6a8a" stroke-width="0.6"/>
<path d="M13.2,457.6v2.8" stroke="#4a6a8a" stroke-width="0.6"/>
<path d="M19.8,456.59999999999997h2.6l0.8,0.9h4v4.8h-7.4z" fill="#eef0f2"/>
<text x="30.00" y="461.40" font-size="6.9" fill="#e4e8ec" textLength="41.37" lengthAdjust="spacingAndGlyphs" >DEMO Project 1</text>
<line x1="15.6" y1="469.65" x2="18.7" y2="469.65" stroke="#4f5a65" stroke-width="0.5" stroke-dasharray="0.8,0.8"/>
<rect x="10.799999999999999" y="467.25" width="4.8" height="4.8" fill="#d5dade" />
<path d="M11.799999999999999,469.65h2.8" stroke="#4a6a8a" stroke-width="0.6"/>
<path d="M13.2,468.25v2.8" stroke="#4a6a8a" stroke-width="0.6"/>
<path d="M19.8,467.24999999999994h2.6l0.8,0.9h4v4.8h-7.4z" fill="#eef0f2"/>
<text x="30.00" y="472.05" font-size="6.9" fill="#e4e8ec" textLength="27.38" lengthAdjust="spacingAndGlyphs" >EI Training</text>
<line x1="15.6" y1="480.3" x2="18.7" y2="480.3" stroke="#4f5a65" stroke-width="0.5" stroke-dasharray="0.8,0.8"/>
<rect x="10.799999999999999" y="477.90000000000003" width="4.8" height="4.8" fill="#d5dade" />
<path d="M11.799999999999999,480.3h2.8" stroke="#4a6a8a" stroke-width="0.6"/>
<path d="M13.2,478.90000000000003v2.8" stroke="#4a6a8a" stroke-width="0.6"/>
<path d="M19.8,477.9h2.6l0.8,0.9h4v4.8h-7.4z" fill="#eef0f2"/>
<text x="30.00" y="482.70" font-size="6.9" fill="#e4e8ec" textLength="53.16" lengthAdjust="spacingAndGlyphs" >P&amp;ID Sample project</text>
<line x1="15.6" y1="490.95" x2="18.7" y2="490.95" stroke="#4f5a65" stroke-width="0.5" stroke-dasharray="0.8,0.8"/>
<rect x="10.799999999999999" y="488.55" width="4.8" height="4.8" fill="#d5dade" />
<path d="M11.799999999999999,490.95h2.8" stroke="#4a6a8a" stroke-width="0.6"/>
<path d="M13.2,489.55v2.8" stroke="#4a6a8a" stroke-width="0.6"/>
<path d="M19.8,488.54999999999995h2.6l0.8,0.9h4v4.8h-7.4z" fill="#eef0f2"/>
<text x="30.00" y="493.35" font-size="6.9" fill="#e4e8ec" textLength="76.07" lengthAdjust="spacingAndGlyphs" >Projekt Add-On ProjectWizard</text>
<line x1="15.6" y1="501.6" x2="18.7" y2="501.6" stroke="#4f5a65" stroke-width="0.5" stroke-dasharray="0.8,0.8"/>
<rect x="10.799999999999999" y="499.20000000000005" width="4.8" height="4.8" fill="#d5dade" />
<path d="M11.799999999999999,501.6h2.8" stroke="#4a6a8a" stroke-width="0.6"/>
<path d="M13.2,500.20000000000005v2.8" stroke="#4a6a8a" stroke-width="0.6"/>
<path d="M19.8,499.2h2.6l0.8,0.9h4v4.8h-7.4z" fill="#eef0f2"/>
<text x="30.00" y="504.00" font-size="6.9" fill="#e4e8ec" textLength="44.88" lengthAdjust="spacingAndGlyphs" >Projekt BAProject</text>
<line x1="15.6" y1="512.25" x2="18.7" y2="512.25" stroke="#4f5a65" stroke-width="0.5" stroke-dasharray="0.8,0.8"/>
<rect x="10.799999999999999" y="509.85" width="4.8" height="4.8" fill="#d5dade" />
<path d="M11.799999999999999,512.25h2.8" stroke="#4a6a8a" stroke-width="0.6"/>
<path d="M13.2,510.85v2.8" stroke="#4a6a8a" stroke-width="0.6"/>
<path d="M19.8,509.84999999999997h2.6l0.8,0.9h4v4.8h-7.4z" fill="#eef0f2"/>
<text x="30.00" y="514.65" font-size="6.9" fill="#e4e8ec" textLength="60.17" lengthAdjust="spacingAndGlyphs" >Sample project BA2021</text>
<line x1="15.6" y1="522.9" x2="18.7" y2="522.9" stroke="#4f5a65" stroke-width="0.5" stroke-dasharray="0.8,0.8"/>
<rect x="10.799999999999999" y="520.5" width="4.8" height="4.8" fill="#d5dade" />
<path d="M11.799999999999999,522.9h2.8" stroke="#4a6a8a" stroke-width="0.6"/>
<path d="M13.2,521.5v2.8" stroke="#4a6a8a" stroke-width="0.6"/>
<path d="M19.8,520.5h2.6l0.8,0.9h4v4.8h-7.4z" fill="#eef0f2"/>
<text x="30.00" y="525.30" font-size="6.9" fill="#e4e8ec" textLength="55.40" lengthAdjust="spacingAndGlyphs" >Schulung Grundlagen</text>
<line x1="15.6" y1="533.5500000000001" x2="18.7" y2="533.5500000000001" stroke="#4f5a65" stroke-width="0.5" stroke-dasharray="0.8,0.8"/>
<rect x="10.799999999999999" y="531.1500000000001" width="4.8" height="4.8" fill="#d5dade" />
<path d="M11.799999999999999,533.5500000000001h2.8" stroke="#4a6a8a" stroke-width="0.6"/>
<path d="M13.2,532.1500000000001v2.8" stroke="#4a6a8a" stroke-width="0.6"/>
<path d="M19.8,531.1500000000001h2.6l0.8,0.9h4v4.8h-7.4z" fill="#eef0f2"/>
<text x="30.00" y="535.95" font-size="6.9" fill="#e4e8ec" textLength="10.50" lengthAdjust="spacingAndGlyphs" >Test</text>
<rect x="4.9" y="590.7" width="54.7" height="12.2" fill="#1d2a37" />
<rect x="59.6" y="590.7" width="42" height="12.2" fill="#3a4652" />
<rect x="101.6" y="590.7" width="49.2" height="12.2" fill="#142230" />
<g fill="none" stroke="#c8ced4" stroke-width="0.7"><rect x="7.2" y="593.2" width="4.2" height="5.4"/></g><path d="M9.7,598.6l2,2" stroke="#e0e5ea" stroke-width="0.9"/>
<g fill="none" stroke="#c8ced4" stroke-width="0.7"><rect x="62.3" y="593.2" width="4.2" height="5.4"/></g><path d="M64.8,598.6l2,2" stroke="#e0e5ea" stroke-width="0.9"/>
<text x="14.60" y="599.40" font-size="6.8" fill="#e3e8ec" textLength="42.00" lengthAdjust="spacingAndGlyphs" >Project Explorer</text>
<text x="71.90" y="599.40" font-size="6.8" fill="#e3e8ec" textLength="27.70" lengthAdjust="spacingAndGlyphs" >Properties</text>
<g transform="translate(20.00,28.90)" fill="none" stroke="#76808a" stroke-width="0.9" stroke-linejoin="round"><rect x="-1.6" y="-3.8" width="3.2" height="3.5"/><path d="M-2.4,-0.3h4.8l0,1.8h-4.8zM0,1.5v2.6M-3,3.2h6"/></g>
<g transform="translate(39.50,28.90)" fill="none" stroke="#76808a" stroke-width="0.9" stroke-linejoin="round"><path d="M-3.4,-3.6h6.8l-2,3h-2.8zM-1.4,-0.6v3.8h2.8v-3.8"/></g>
<g transform="translate(56.50,28.90)" fill="none" stroke="#76808a" stroke-width="0.9" stroke-linejoin="round"><rect x="-3.8" y="-1.2" width="2.6" height="2.6"/><path d="M-1.2,-1.2l2.6,-2.6h2.6v7.8h-2.6l-2.6,-2.6"/></g>
<g transform="translate(74.00,28.90)" fill="none" stroke="#76808a" stroke-width="0.9" stroke-linejoin="round"><rect x="-4" y="-3.8" width="8" height="7.6" stroke-dasharray="1.2,0.8"/><circle r="1.6"/><path d="M-2.6,0h5.2M0,-2.6v5.2"/></g>
<g transform="translate(93.30,28.90)" fill="none" stroke="#76808a" stroke-width="0.9" stroke-linejoin="round"><path d="M0.5,-3.2v6.4M0.5,0h3.4"/><rect x="-4" y="-1.8" width="3.2" height="3.6" fill="#76808a"/></g>
<g transform="translate(110.50,28.90)" fill="none" stroke="#76808a" stroke-width="0.9" stroke-linejoin="round"><path d="M0,-4.4v2.4M-3.2,-1.2h6.4"/><rect x="-1.6" y="0.6" width="3.2" height="3.6" fill="#76808a"/></g>
<g fill="#76808a"><rect x="126.9" y="25.2" width="2.2" height="2.2"/><rect x="131.5" y="25.6" width="1.5" height="1.5"/><rect x="126.9" y="30.6" width="1.5" height="1.5"/><rect x="130.8" y="30.2" width="2.6" height="2.4"/></g>
<g transform="translate(167.50,28.90)" fill="none" stroke="#76808a" stroke-width="0.9" stroke-linejoin="round"><path d="M-3,-3.4l1.4,1.4M3,-3.4l-1.4,1.4M0,-4v1.6M0,3v1.8"/></g>
<text x="164.20" y="31.20" font-size="4.2" fill="#76808a" textLength="6.40" lengthAdjust="spacingAndGlyphs" >3D</text>
<g transform="translate(187.00,28.90)" fill="none" stroke="#76808a" stroke-width="0.7" stroke-linejoin="round"><rect x="-5.8" y="-2.8" width="11.6" height="5.6"/><path d="M-5.8,0h11.6M-2.9,-2.8v5.6M0,-2.8v5.6M2.9,-2.8v5.6"/></g>
<g transform="translate(206.80,28.90)" fill="none" stroke="#76808a" stroke-width="0.9" stroke-linejoin="round"><rect x="-3.2" y="-4.6" width="6.4" height="9.2" rx="0.6"/><path d="M3.2,-0.8h-1.2v1.8h1.2"/></g>
<g transform="translate(224.00,28.90)" fill="none" stroke="#76808a" stroke-width="0.7" stroke-linejoin="round"><rect x="-3.8" y="-4.2" width="7.6" height="8.4"/><path d="M0,-4.2v8.4M-2.2,-3v6M2.2,-3v6"/></g>
<g transform="translate(241.50,28.90)" fill="none" stroke="#76808a" stroke-width="0.9" stroke-linejoin="round"><path d="M-4.6,1.8v-3.4l8,-2.4h1.4v4.4M-2.8,-1.6v3.4M-0.8,-2.4v3.4M1.2,-3v3.4M3.4,-3.8v3.8"/></g>
<g transform="translate(258.60,28.90)" fill="none" stroke="#dde2e6" stroke-width="0.9" stroke-linejoin="round"><path d="M-4.4,-4.6h9v5.4h-4v4.6h-5z"/><path d="M-2.8,-3h5.6v2.6h-4v4.2h-1.6z" stroke-dasharray="0.9,0.7"/></g>
<rect x="269.00" y="32.20" width="1.3" height="1.3" fill="#dde2e6"/>
<g transform="translate(286.00,28.90)" fill="none" stroke="#76808a" stroke-width="0.7" stroke-linejoin="round"><path d="M-4.8,-3v6M4.8,-3v6M-4.8,0h9.6M-4.8,-1.8h9.6M-4.8,1.8h9.6"/></g>
<g transform="translate(305.50,28.90)" fill="none" stroke="#76808a" stroke-width="0.9" stroke-linejoin="round"><path d="M-4.2,-4v7.4h8.4v-2.2h-6v-5.2z"/><path d="M1.6,1.2h2.6"/></g>
<rect x="315.6" y="22.6" width="31.3" height="13.4" fill="#2e3a46" />
<rect x="347.5" y="22.6" width="10.3" height="13.4" fill="#2e3a46" />
<line x1="346.9" y1="23.5" x2="346.9" y2="35" stroke="#3e4a55" stroke-width="0.6" />
<text x="317.20" y="32.20" font-size="7.2" fill="#505a64" textLength="28.00" lengthAdjust="spacingAndGlyphs" >BR 170/70</text>
<path d="M350.2,28l2.2,2.2l2.2,-2.2" fill="none" stroke="#505a64" stroke-width="0.7"/>
<g transform="translate(370.50,28.90)" fill="none" stroke="#76808a" stroke-width="0.9" stroke-linejoin="round"><path d="M-3.5,3.5l7,-7"/><circle r="1.6" fill="{D}"/></g>
<rect x="380.6" y="22.6" width="36.9" height="13.4" fill="#2e3a46" />
<rect x="418.3" y="22.6" width="10.5" height="13.4" fill="#2e3a46" />
<line x1="417.9" y1="23.5" x2="417.9" y2="35" stroke="#3e4a55" stroke-width="0.6" />
<text x="382.00" y="32.20" font-size="7.2" fill="#505a64" textLength="33.50" lengthAdjust="spacingAndGlyphs" >NYM-J 3x1,5</text>
<path d="M421.4,28l2.2,2.2l2.2,-2.2" fill="none" stroke="#505a64" stroke-width="0.7"/>
<g transform="translate(441.50,28.90)" fill="none" stroke="#76808a" stroke-width="0.7" stroke-linejoin="round"><rect x="-2.8" y="-4.6" width="5.6" height="7.2"/><path d="M-1.6,-2.6h3.2M-1.6,-1h3.2M-1.6,0.6h3.2M-4.2,4.4h8.4"/></g>
<g transform="translate(464.60,28.90)" fill="none" stroke="#dde2e6" stroke-width="0.8" stroke-linejoin="round"><rect x="-5.2" y="-4.4" width="5.6" height="2.6"/><rect x="-3" y="-1.6" width="7" height="2.6"/><rect x="-1.4" y="1.2" width="7" height="2.8"/><path d="M0.4,-4.4h2.2v2.8"/></g>
<g transform="translate(481.40,28.90)" fill="none" stroke="#dde2e6" stroke-width="0.9" stroke-linejoin="round"><rect x="-2.6" y="-4.4" width="5.2" height="8.8" rx="1"/><path d="M-2.6,2.2h5.2"/></g>
<g transform="translate(501.50,28.90)" fill="none" stroke="#dde2e6" stroke-width="0.9" stroke-linejoin="round"><rect x="-4.2" y="-3.4" width="8.4" height="6.2"/><rect x="-2.2" y="-1.4" width="3.6" height="2.4" fill="#dde2e6"/></g>
<circle cx="505" cy="32.8" r="1.9" fill="#1d9bd1"/><circle cx="505" cy="32.8" r="0.8" fill="none" stroke="#0b4a6a" stroke-width="0.4"/>
<g transform="translate(518.50,28.90)" fill="none" stroke="#dde2e6" stroke-width="0.9" stroke-linejoin="round"><rect x="-2.4" y="-2.4" width="4.8" height="5"/><path d="M0,-4.6v2.2M0,2.6v2.2"/></g>
<circle cx="523" cy="32.8" r="1.9" fill="#1d9bd1"/><circle cx="523" cy="32.8" r="0.8" fill="none" stroke="#0b4a6a" stroke-width="0.4"/>
<g transform="translate(535.50,28.90)" fill="none" stroke="#dde2e6" stroke-width="0.9" stroke-linejoin="round"><path d="M-3.4,3.2l6.8,-6.4"/><ellipse rx="2.2" ry="1.4" transform="rotate(-40)" fill="#dde2e6"/></g>
<circle cx="539.4" cy="32.8" r="1.9" fill="#1d9bd1"/><circle cx="539.4" cy="32.8" r="0.8" fill="none" stroke="#0b4a6a" stroke-width="0.4"/>
<g transform="translate(552.50,28.90)" fill="none" stroke="#dde2e6" stroke-width="0.9" stroke-linejoin="round"><path d="M-1.8,-4.8h3.6M0,-4.8v2.6M-1.8,4.6h3.6M0,2.8v1.8"/><circle cy="0.4" r="2.2" fill="#dde2e6"/></g>
<circle cx="556.9" cy="32.8" r="1.9" fill="#1d9bd1"/><circle cx="556.9" cy="32.8" r="0.8" fill="none" stroke="#0b4a6a" stroke-width="0.4"/>
<g transform="translate(569.50,28.90)" fill="none" stroke="#dde2e6" stroke-width="0.9" stroke-linejoin="round"><path d="M-1.8,-4.6h3.6M0,-4.6v2.4M-2.2,4.4h4.4M0,2.4v2"/><circle cy="0" r="2.2"/></g>
<circle cx="573.75" cy="32.8" r="1.9" fill="#1d9bd1"/><circle cx="573.75" cy="32.8" r="0.8" fill="none" stroke="#0b4a6a" stroke-width="0.4"/>
<g transform="translate(586.50,28.90)" fill="none" stroke="#dde2e6" stroke-width="0.9" stroke-linejoin="round"><rect x="-4.4" y="-3.4" width="8.8" height="6"/><rect x="-2.6" y="-1.6" width="5.2" height="2.4" fill="#dde2e6"/></g>
<circle cx="590" cy="32.8" r="1.9" fill="#1d9bd1"/><circle cx="590" cy="32.8" r="0.8" fill="none" stroke="#0b4a6a" stroke-width="0.4"/>
<g transform="translate(604.00,28.90)" fill="none" stroke="#dde2e6" stroke-width="0.9" stroke-linejoin="round"><path d="M-4.8,-0.2h9.6" stroke-width="1.2"/><circle cx="1.6" cy="-0.2" r="1.3" fill="#dde2e6"/></g>
<circle cx="607.5" cy="32.8" r="1.9" fill="#1d9bd1"/><circle cx="607.5" cy="32.8" r="0.8" fill="none" stroke="#0b4a6a" stroke-width="0.4"/>
<g transform="translate(620.30,28.90)" fill="none" stroke="#dde2e6" stroke-width="0.9" stroke-linejoin="round"><circle r="3.2"/><path d="M0,-1.8v2h1.6"/></g>
<circle cx="624.4" cy="32.8" r="1.9" fill="#1d9bd1"/><circle cx="624.4" cy="32.8" r="0.8" fill="none" stroke="#0b4a6a" stroke-width="0.4"/>
<g transform="translate(637.80,28.90)" fill="none" stroke="#dde2e6" stroke-width="0.8" stroke-linejoin="round"><rect x="-3" y="-3.8" width="6" height="7.6"/><path d="M-4.4,-4.6l2,2M4.4,-4.6l-2,2M-4.4,4.4l2,-2M4.4,4.4l-2,-2M-1,-2.6v5.2"/></g>
<circle cx="642.5" cy="32.8" r="1.9" fill="#1d9bd1"/><circle cx="642.5" cy="32.8" r="0.8" fill="none" stroke="#0b4a6a" stroke-width="0.4"/>
<g transform="translate(654.50,28.90)" fill="none" stroke="#dde2e6" stroke-width="0.8" stroke-linejoin="round"><rect x="-3.2" y="-4" width="6.4" height="8"/><path d="M-1.6,-1.2h1.6v2.4h-1.6M-3.2,-1.2h1"/></g>
<circle cx="658" cy="32.8" r="1.9" fill="#1d9bd1"/><circle cx="658" cy="32.8" r="0.8" fill="none" stroke="#0b4a6a" stroke-width="0.4"/>
<g transform="translate(672.00,28.90)" fill="none" stroke="#dde2e6" stroke-width="0.9" stroke-linejoin="round"><path d="M-3,3.6v-3.6a3,3.2 0 0 1 6,0v3.6z"/><rect x="-1.4" y="0.2" width="2.8" height="2.6" fill="#dde2e6"/></g>
<g transform="translate(17.70,47.50)" fill="none" stroke="#dde2e6" stroke-width="0.9" stroke-linejoin="round"><path d="M-3.8,-4.8h4.6l3,3v7h-7.6z"/></g>
<rect x="19.5" y="50.2" width="2.2" height="2.2" fill="#dde2e6"/>
<g transform="translate(35.00,47.50)" fill="none" stroke="#dde2e6" stroke-width="0.9" stroke-linejoin="round"><path d="M-6,-4.6h4.6l1.2,1.6h6.2v8h-12z M-6,-2.4h12"/></g>
<g transform="translate(50.90,47.50)" fill="none" stroke="#dde2e6" stroke-width="0.9" stroke-linejoin="round"><rect x="-4.8" y="-4.8" width="9.6" height="9.6"/><rect x="-2.2" y="-4.8" width="4.4" height="3.2" fill="#dde2e6"/></g>
<g transform="translate(68.60,47.50)" fill="none" stroke="#dde2e6" stroke-width="0.9" stroke-linejoin="round"><path d="M-4.8,-4.8h9.6v6M1.8,4.8h-6.6v-9.6"/><rect x="-2.2" y="-4.8" width="4.4" height="3.2" fill="#dde2e6"/></g>
<rect x="72.6" y="50.6" width="2.2" height="2.2" fill="#dde2e6"/>
<g transform="translate(85.60,47.50)" fill="none" stroke="#dde2e6" stroke-width="0.8" stroke-linejoin="round"><rect x="-5.6" y="-5.4" width="9" height="9"/><rect x="-2.8" y="-5.4" width="4.4" height="3" fill="#dde2e6"/><path d="M4.6,-3.6v8.8h-8.4"/><path d="M6,-1.8v8.4h-8"/></g>
<g transform="translate(105.50,47.50)" fill="none" stroke="#dde2e6" stroke-width="0.9" stroke-linejoin="round"><rect x="-4.6" y="-2.6" width="9.2" height="5.6" rx="1.2"/><path d="M-3,-2.6v-2.4h6v2.4M-3,1.6v3.2h6v-3.2"/></g>
<g transform="translate(125.70,47.50)" fill="none" stroke="#dde2e6" stroke-width="0.9" stroke-linejoin="round"><path d="M3.4,-4.2v8.4l-7,-4.2z"/></g>
<g transform="translate(142.40,47.50)" fill="none" stroke="#dde2e6" stroke-width="0.9" stroke-linejoin="round"><path d="M-3.2,-4.2v8.4l7,-4.2z"/></g>
<g transform="translate(159.60,47.50)" fill="none" stroke="#dde2e6" stroke-width="0.9" stroke-linejoin="round"><path d="M-4.2,-4.6v9.2M4,-4.2v8.4l-7,-4.2z"/></g>
<g transform="translate(176.60,47.50)" fill="none" stroke="#dde2e6" stroke-width="0.9" stroke-linejoin="round"><path d="M4.2,-4.6v9.2M-4,-4.2v8.4l7,-4.2z"/></g>
<g transform="translate(193.20,47.50)" fill="none" stroke="#dde2e6" stroke-width="0.9" stroke-linejoin="round"><path d="M-4.6,-4.6v9.2M-3,-4.6v9.2M4.6,-4.2v8.4l-7,-4.2z"/></g>
<g transform="translate(210.20,47.50)" fill="none" stroke="#dde2e6" stroke-width="0.9" stroke-linejoin="round"><path d="M4.6,-4.6v9.2M3,-4.6v9.2M-4.6,-4.2v8.4l7,-4.2z"/></g>
<g transform="translate(230.50,47.50)" fill="none" stroke="#76808a" stroke-width="0.9" stroke-linejoin="round"><path d="M-4.2,-1.8l2.6,-2.6v1.6h3.4a2.8,2.8 0 0 1 2.8,2.8v3.6h-6.8"/></g>
<g transform="translate(247.00,47.50)" fill="none" stroke="#76808a" stroke-width="0.9" stroke-linejoin="round"><path d="M4.2,-1.8l-2.6,-2.6v1.6h-3.4a2.8,2.8 0 0 0 -2.8,2.8v3.6h6.8"/></g>
<g transform="translate(267.00,47.50)" fill="none" stroke="#dde2e6" stroke-width="0.9" stroke-linejoin="round"><circle cx="-2.2" cy="3" r="1.6"/><circle cx="2.2" cy="3" r="1.6"/><path d="M-1.4,1.6l3.6,-6.4M1.4,1.6l-3.6,-6.4"/></g>
<g transform="translate(284.60,47.50)" fill="none" stroke="#dde2e6" stroke-width="0.9" stroke-linejoin="round"><rect x="-4.2" y="-4.8" width="6.6" height="8.4"/><path d="M3.8,-3.6v8.8h-6.4"/></g>
<g transform="translate(323.20,47.50)" fill="none" stroke="#dde2e6" stroke-width="0.4" stroke-linejoin="round"><rect x="-4.2" y="-4.2" width="3.6" height="3.6" fill="#dde2e6"/><rect x="0.6" y="-4.2" width="3.6" height="3.6" fill="#dde2e6"/><rect x="-4.2" y="0.6" width="3.6" height="3.6" fill="#dde2e6"/><rect x="0.6" y="0.6" width="3.6" height="3.6" fill="#dde2e6"/></g>
<g fill="#333f4b"><rect x="319.9" y="43.9" width="1.4" height="1.4"/><rect x="324.7" y="43.9" width="1.4" height="1.4"/><rect x="319.9" y="48.7" width="1.4" height="1.4"/><rect x="324.7" y="48.7" width="1.4" height="1.4"/></g>
<g transform="translate(341.00,47.50)" fill="none" stroke="#dde2e6" stroke-width="0.9" stroke-linejoin="round"><path d="M-4.2,2.6h8.4M-3.4,2.6l6,-5.2M0.2,0.2a3,3 0 0 1 0.8,2.4"/></g>
<g transform="translate(357.60,47.50)" fill="none" stroke="#dde2e6" stroke-width="0.9" stroke-linejoin="round"><path d="M0,-3v6.4"/><circle cy="-4.2" r="1.2"/><circle cy="4.6" r="1.2"/></g>
<g transform="translate(375.60,47.50)" fill="none" stroke="#dde2e6" stroke-width="0.9" stroke-linejoin="round"><rect x="-4.4" y="-3" width="8.4" height="5.8"/><rect x="-2.4" y="-1.2" width="3.6" height="2.4" fill="#dde2e6"/></g>
<path d="M377.8,50.2 l1.5,1.5 l3,-3" fill="none" stroke="#3fcf4a" stroke-width="1.1"/>
<rect x="385.00" y="50.70" width="1.3" height="1.3" fill="#dde2e6"/>
<g transform="translate(397.60,47.50)" fill="none" stroke="#dde2e6" stroke-width="0.9" stroke-linejoin="round"><rect x="-2.2" y="-2.4" width="4.4" height="5"/><path d="M0,-4.6v2.2M0,2.6v2.2"/></g>
<path d="M399.40000000000003,50.2 l1.5,1.5 l3,-3" fill="none" stroke="#3fcf4a" stroke-width="1.1"/>
<rect x="407.40" y="50.70" width="1.3" height="1.3" fill="#dde2e6"/>
<g transform="translate(419.50,47.50)" fill="none" stroke="#dde2e6" stroke-width="0.9" stroke-linejoin="round"><path d="M-3,3l6,-6"/><ellipse rx="2" ry="1.2" transform="rotate(-45)" fill="#dde2e6"/></g>
<path d="M421.8,50.2 l1.5,1.5 l3,-3" fill="none" stroke="#3fcf4a" stroke-width="1.1"/>
<rect x="430.00" y="50.70" width="1.3" height="1.3" fill="#dde2e6"/>
<g transform="translate(443.40,47.50)" fill="none" stroke="#dde2e6" stroke-width="0.9" stroke-linejoin="round"><path d="M-1.8,-4.8h3.6M0,-4.8v2.6M-1.8,4.6h3.6M0,2.8v1.8"/><circle cy="0.4" r="2.2" fill="#dde2e6"/></g>
<path d="M445.3,50.2 l1.5,1.5 l3,-3" fill="none" stroke="#3fcf4a" stroke-width="1.1"/>
<rect x="452.40" y="50.70" width="1.3" height="1.3" fill="#dde2e6"/>
<g transform="translate(465.60,47.50)" fill="none" stroke="#dde2e6" stroke-width="0.9" stroke-linejoin="round"><path d="M-1.8,-4.6h3.6M0,-4.6v2.4M-2.2,4.4h4.4M0,2.4v2"/><circle r="2.2"/></g>
<path d="M467.3,50.2 l1.5,1.5 l3,-3" fill="none" stroke="#3fcf4a" stroke-width="1.1"/>
<rect x="475.00" y="50.70" width="1.3" height="1.3" fill="#dde2e6"/>
<g transform="translate(487.80,47.50)" fill="none" stroke="#dde2e6" stroke-width="0.9" stroke-linejoin="round"><rect x="-4.6" y="-3" width="9" height="6"/><rect x="-2.6" y="-1.2" width="5.2" height="2.4" fill="#dde2e6"/></g>
<path d="M489.8,50.2 l1.5,1.5 l3,-3" fill="none" stroke="#3fcf4a" stroke-width="1.1"/>
<rect x="497.40" y="50.70" width="1.3" height="1.3" fill="#dde2e6"/>
<g transform="translate(514.30,47.50)" fill="none" stroke="#dde2e6" stroke-width="0.9" stroke-linejoin="round"><path d="M-3.8,4.2l6,-6M1,-3.4l2.2,2.2M2.6,-4.4l1.8,1.8"/><rect x="-1.6" y="-1.2" width="3" height="5.6" transform="rotate(45)"/></g>
<g transform="translate(532.80,47.50)" fill="none" stroke="#dde2e6" stroke-width="0.9" stroke-linejoin="round"><path d="M-3.4,2.6l5.6,-5.6" stroke-width="1.8"/><circle cx="3.4" cy="-4" r="0.9" fill="#dde2e6"/></g>
<rect x="527" y="51.2" width="10.6" height="2.4" fill="#050505"/><rect x="527" y="51" width="3" height="0.9" fill="#d2712a"/><rect x="530" y="51" width="3" height="0.9" fill="#3fcf4a"/><rect x="533" y="51" width="3" height="0.9" fill="#2a7ad2"/>
<rect x="541.90" y="50.70" width="1.3" height="1.3" fill="#dde2e6"/>
<g fill="#dde2e6"><rect x="551.2" y="44.6" width="1" height="1.2"/><rect x="551.2" y="47.4" width="1" height="1"/><rect x="553.0" y="44.6" width="1" height="1.2"/><rect x="553.0" y="47.4" width="1" height="1"/><rect x="554.8" y="44.6" width="1" height="1.2"/><rect x="554.8" y="47.4" width="1" height="1"/><rect x="556.6" y="44.6" width="1" height="1.2"/><rect x="556.6" y="47.4" width="1" height="1"/><rect x="558.4" y="44.6" width="1" height="1.2"/><rect x="558.4" y="47.4" width="1" height="1"/><rect x="551" y="43.6" width="9" height="0.6"/></g>
<rect x="564.40" y="50.70" width="1.3" height="1.3" fill="#dde2e6"/>
<g fill="#dde2e6"><rect x="573.8" y="43.4" width="8.2" height="1.2" opacity="0.7"/><rect x="573.8" y="45.8" width="8.2" height="1.6"/><rect x="573.8" y="48.2" width="8.2" height="1"/></g>
<rect x="586.40" y="50.70" width="1.3" height="1.3" fill="#dde2e6"/>
<g transform="translate(600.00,46.60)" fill="none" stroke="#dde2e6" stroke-width="0.9" stroke-linejoin="round"><path d="M-4,0l3.6,-3.8l4.4,4l-3.6,3.4z"/><path d="M3.6,1.2v2.4" stroke-width="1.3"/></g>
<rect x="595" y="51.2" width="10" height="2.4" fill="#050505"/>
<rect x="609.40" y="50.70" width="1.3" height="1.3" fill="#dde2e6"/>
<rect x="615.8" y="41.2" width="12" height="12.4" fill="#ffffff" />
<rect x="631.90" y="50.70" width="1.3" height="1.3" fill="#dde2e6"/>
<g transform="translate(648.00,47.50)" fill="none" stroke="#dde2e6" stroke-width="0.8" stroke-linejoin="round"><path d="M-4.2,0.6l4.2,2l4.2,-2M-4.2,2.8l4.2,2l4.2,-2"/></g>
<path d="M643.8,46.4l4.2,-2.4l4.2,2.4l-4.2,2.4z" fill="#44e24c"/>
<rect x="652" y="50.6" width="2" height="2" fill="#d0652a" />
<rect x="660.2" y="42.6" width="9.6" height="9.8" fill="#2e3a46" />
<g transform="translate(665.00,47.50)" fill="none" stroke="#4c5661" stroke-width="0.7" stroke-linejoin="round"><path d="M-3.8,-2.2a1.6,1.6 0 1 1 1.4,2.4a1.6,1.6 0 1 1 -1.4,2.4M0,0l1.6,2l2.4,-3"/></g>
<path d="M684.2,42.4v9.2l2.2,-2l1.6,3.2l1.4,-0.6l-1.6,-3.2h3z" fill="#dde2e6"/>
<path d="M699.6,51.8l3,-9h1.8l3,9h-2l-0.7,-2.2h-2.4l-0.7,2.2zM702.8,47.8h1.6l-0.8,-2.8z" fill="#dde2e6"/>
<rect x="711.90" y="50.70" width="1.3" height="1.3" fill="#dde2e6"/>
<path d="M721.6,51.8l3,-9h1.8l3,9h-2l-0.7,-2.2h-2.4l-0.7,2.2zM724.8,47.8h1.6l-0.8,-2.8z" fill="#dde2e6"/>
<circle cx="727.8" cy="43" r="1.5" fill="#3ab6d6"/>
<rect x="734.20" y="50.70" width="1.3" height="1.3" fill="#dde2e6"/>
<g transform="translate(748.10,47.50)" fill="none" stroke="#dde2e6" stroke-width="0.8" stroke-linejoin="round"><rect x="-4.6" y="-3.8" width="9.2" height="7.6" rx="0.6"/><path d="M-3,-2.4v4.2h6.4v-1.8h-5"/></g>
<rect x="744.6" y="44.8" width="1.2" height="1.4" fill="#3ab6d6"/>
<g transform="translate(768.00,47.50)" fill="none" stroke="#dde2e6" stroke-width="0.9" stroke-linejoin="round"><path d="M-4.2,-4l8.4,7.8"/></g>
<g transform="translate(784.00,47.50)" fill="none" stroke="#dde2e6" stroke-width="0.9" stroke-linejoin="round"><rect x="-5.2" y="-3.4" width="10.4" height="6.6"/></g>
<rect x="793.15" y="50.70" width="1.3" height="1.3" fill="#dde2e6"/>
<g transform="translate(806.00,47.50)" fill="none" stroke="#dde2e6" stroke-width="0.9" stroke-linejoin="round"><circle r="3.7"/></g>
<rect x="815.40" y="50.70" width="1.3" height="1.3" fill="#dde2e6"/>
<g transform="translate(829.00,47.50)" fill="none" stroke="#dde2e6" stroke-width="0.9" stroke-linejoin="round"><path d="M-1.6,-3.8a3.8,3.8 0 0 1 0,7.6"/></g>
<rect x="838.15" y="50.70" width="1.3" height="1.3" fill="#dde2e6"/>
<g transform="translate(852.00,47.50)" fill="none" stroke="#dde2e6" stroke-width="0.9" stroke-linejoin="round"><path d="M-2.4,-2.6a4,4 0 0 1 3.6,2.8"/></g>
<rect x="860.80" y="50.70" width="1.3" height="1.3" fill="#dde2e6"/>
<g transform="translate(874.80,47.50)" fill="none" stroke="#dde2e6" stroke-width="0.9" stroke-linejoin="round"><path d="M-3.8,-4.2a7,7 0 0 1 7,6.2"/></g>
<rect x="883.00" y="50.70" width="1.3" height="1.3" fill="#dde2e6"/>
<g transform="translate(897.00,47.50)" fill="none" stroke="#dde2e6" stroke-width="0.8" stroke-linejoin="round"><path d="M-3.6,3.4l3.4,-3.4l2.2,1.6l2,-4.2"/><rect x="-4.8" y="-5" width="2" height="1.6"/><rect x="3" y="-5" width="2" height="1.6"/></g>
<circle cx="893" cy="51.2" r="1.6" fill="#dde2e6"/><circle cx="901" cy="51.2" r="1.6" fill="#dde2e6"/>
<g transform="translate(912.90,47.50)" fill="none" stroke="#dde2e6" stroke-width="0.8" stroke-linejoin="round"><ellipse rx="5.4" ry="3.2"/><path d="M-5.4,0h10.8M0,-3.2v6.4"/></g>
<rect x="922.40" y="50.70" width="1.3" height="1.3" fill="#dde2e6"/>
<g transform="translate(935.40,47.50)" fill="none" stroke="#dde2e6" stroke-width="0.8" stroke-linejoin="round"><path d="M-4.4,0l2.2,-3.8h4.4l2.2,3.8l-2.2,3.8h-4.4z"/></g>
<rect x="944.60" y="50.70" width="1.3" height="1.3" fill="#dde2e6"/>
<g transform="translate(961.30,47.50)" fill="none" stroke="#dde2e6" stroke-width="0.8" stroke-linejoin="round"><rect x="-4.4" y="-4.4" width="8.8" height="8.8"/><path d="M-3.4,3.2l2.6,-3l1.6,1.6l2.6,-3M2,-3h1.6v1.6"/></g>
<g transform="translate(978.30,47.50)" fill="none" stroke="#dde2e6" stroke-width="0.8" stroke-linejoin="round"><rect x="-4.4" y="-5" width="8.8" height="9.2"/><path d="M-3.4,2.6l2.6,-3l1.6,1.6l2.6,-3"/><path d="M-1,5.2h5"/></g>
<g transform="translate(997.80,47.50)" fill="none" stroke="#dde2e6" stroke-width="0.9" stroke-linejoin="round"><path d="M-5,-2.4v4.8M5,-2.4v4.8M-5,-1.2h10M-5,1.2h10"/></g>
<g transform="translate(1015.00,47.50)" fill="none" stroke="#dde2e6" stroke-width="0.9" stroke-linejoin="round"><path d="M-3,-2.4h5v5"/><circle cx="-3" cy="-2.4" r="1" fill="#dde2e6"/><circle cx="2" cy="3" r="1" fill="#dde2e6"/></g>
<g transform="translate(21.60,66.20)" fill="none" stroke="#dde2e6" stroke-width="0.9" stroke-linejoin="round"><rect x="-3.8" y="-4" width="7.6" height="8"/><path d="M-3.8,2.4h7.6M0,-2.6v3.6M-1.6,-0.4h3.2"/></g>
<g transform="translate(37.80,66.20)" fill="none" stroke="#dde2e6" stroke-width="0.9" stroke-linejoin="round"><rect x="-3.6" y="-3.8" width="7.2" height="7.6" rx="0.8"/><path d="M-1.4,-3.8v7.6"/></g>
<g transform="translate(55.80,66.20)" fill="none" stroke="#dde2e6" stroke-width="0.9" stroke-linejoin="round"><rect x="-3.6" y="-4.8" width="7.2" height="9.6"/><path d="M3.6,-1.2h-1v2.4h1"/></g>
<g transform="translate(72.50,66.20)" fill="none" stroke="#dde2e6" stroke-width="0.9" stroke-linejoin="round"><path d="M-3.4,-3.6l6.4,1.6v5.4l-6.4,0.8z"/></g>
<g transform="translate(89.70,66.20)" fill="none" stroke="#dde2e6" stroke-width="0.9" stroke-linejoin="round"><rect x="-2.6" y="-4" width="5.2" height="8"/></g>
<g transform="translate(106.80,66.20)" fill="none" stroke="#dde2e6" stroke-width="1.1" stroke-linejoin="round"><path d="M-5.6,-1.2h2.2l1.4,2.6h4l1.4,-2.6h2.2"/></g>
<g transform="translate(123.40,66.20)" fill="none" stroke="#dde2e6" stroke-width="1.1" stroke-linejoin="round"><path d="M-4.6,-2h9.2M-4.6,1.6h9.2M-2,-4.6v9.2M2,-4.6v9.2"/></g>
<g transform="translate(140.80,66.20)" fill="none" stroke="#dde2e6" stroke-width="0.9" stroke-linejoin="round"><path d="M-4.6,-2h9.2M-4.6,1.6h9.2M-2.4,-4.6v9.2M-0.6,-4.6v9.2M2.4,-4.6v9.2"/></g>
<g transform="translate(158.00,66.20)" fill="none" stroke="#dde2e6" stroke-width="1.0" stroke-linejoin="round"><path d="M-4.6,-2.4h9.2M-4.6,0.2h9.2M-4.6,3h9.2M-2.2,-4.4v2"/></g>
<g transform="translate(175.00,66.20)" fill="none" stroke="#dde2e6" stroke-width="1.3" stroke-linejoin="round"><rect x="-4.6" y="-3.6" width="9.2" height="7.2"/></g>
<g transform="translate(194.60,66.20)" fill="none" stroke="#dde2e6" stroke-width="0.9" stroke-linejoin="round"><path d="M-4.2,3.6l1.6,-4.4l6.6,-3l-1.6,4.4z M-2,2.2l4,-4.6"/></g>
<g transform="translate(211.40,66.20)" fill="none" stroke="#dde2e6" stroke-width="0.9" stroke-linejoin="round"><path d="M-4,4l1.6,-4.2l6.2,-3l-1.6,4.2z M-1.8,2.6l3.6,-4.6M-2,-5l1.4,1.6M1.6,-5l-0.4,1.8"/></g>
<g transform="translate(228.70,66.20)" fill="none" stroke="#dde2e6" stroke-width="0.9" stroke-linejoin="round"><path d="M-5,-3l2.2,1.8l6.6,0.4l1.6,3.4l-6.4,-0.4zM-1.2,-1l2.8,3"/></g>
<g transform="translate(248.50,66.20)" fill="none" stroke="#dde2e6" stroke-width="0.9" stroke-linejoin="round"><path d="M0,-4.2l4.2,7.8h-8.4z"/><path d="M0,-1v2.4M-1.8,2h3.6"/></g>
<g transform="translate(265.60,66.20)" fill="none" stroke="#dde2e6" stroke-width="0.9" stroke-linejoin="round"><ellipse rx="4.2" ry="3.2"/><path d="M-2.4,0l2.4,-1.8l2.4,1.8l-2.4,1.8z"/></g>
<g transform="translate(282.50,66.20)" fill="none" stroke="#dde2e6" stroke-width="0.9" stroke-linejoin="round"><rect x="-4.6" y="-2.2" width="9.2" height="5.6" rx="0.6"/><path d="M-3,-2.2v-1.6M3,-2.2v-1.6M-2.4,0.4h4.8"/></g>
<g transform="translate(299.60,66.20)" fill="none" stroke="#dde2e6" stroke-width="0.9" stroke-linejoin="round"><path d="M-5.8,3.2v-3.4h2.4l1,-2h2l1,2h1l1,-2h2l1,2v3.4z"/></g>
<g transform="translate(316.80,66.20)" fill="none" stroke="#dde2e6" stroke-width="0.9" stroke-linejoin="round"><rect x="-4.6" y="-2.2" width="9.2" height="5.6" rx="0.6"/><path d="M-3,-2.2v-1.6M3,-2.2v-1.6M-2.4,0.4h4.8"/></g>
<circle cx="320.8" cy="69.4" r="1.2" fill="#3fcf4a"/>
<g transform="translate(333.50,66.20)" fill="none" stroke="#dde2e6" stroke-width="0.9" stroke-linejoin="round"><rect x="-4.6" y="-2.8" width="9.2" height="5.6"/><rect x="-2.4" y="-1.2" width="4.8" height="2.4" fill="#dde2e6"/></g>
<g transform="translate(351.20,66.20)" fill="none" stroke="#dde2e6" stroke-width="0.9" stroke-linejoin="round"><rect x="-2.6" y="-2.8" width="5.2" height="5.6"/><path d="M0,-4.8v2M0,2.8v2"/></g>
<g transform="translate(368.20,66.20)" fill="none" stroke="#dde2e6" stroke-width="0.9" stroke-linejoin="round"><path d="M-2.8,3.2v-3.4a2.8,3 0 0 1 5.6,0v3.4zM-3.6,3.2h7.2"/></g>
<path d="M381.8,64.6l1.2,1.2l1.2,-1.2l1.2,1.2l1.2,-1.2l1.2,1.2v2.2h-6z" fill="#dde2e6"/>
<g transform="translate(402.20,66.20)" fill="none" stroke="#dde2e6" stroke-width="0.9" stroke-linejoin="round"><rect x="-4.6" y="-3" width="9.2" height="6"/><rect x="-2.6" y="-1.2" width="4.6" height="2.4" fill="#dde2e6"/></g>
<g transform="translate(422.00,66.20)" fill="none" stroke="#dde2e6" stroke-width="0.8" stroke-linejoin="round"><rect x="-4" y="-4.4" width="6" height="8"/><rect x="-1.6" y="-3.2" width="5.6" height="8"/></g>
<rect x="421.2" y="62.2" width="1.6" height="7" fill="#3fcf4a"/>
<g transform="translate(439.40,66.20)" fill="none" stroke="#dde2e6" stroke-width="0.9" stroke-linejoin="round"><path d="M-5,1v-2.6h8v-3M-3,-1.6v3M0,-1.6v3"/><circle cx="3" cy="-4.8" r="0.9"/></g>
<path d="M440.40000000000003,69.4 l1.5,1.5 l3,-3" fill="none" stroke="#3fcf4a" stroke-width="1.1"/>
<g transform="translate(458.40,66.20)" fill="none" stroke="#dde2e6" stroke-width="0.9" stroke-linejoin="round"><path d="M-5,1v-2.6h8v-3M-3,-1.6v3M0,-1.6v3"/><circle cx="3" cy="-4.8" r="0.9"/></g>
<g transform="translate(478.60,66.20)" fill="none" stroke="#dde2e6" stroke-width="0.8" stroke-linejoin="round"><rect x="-5.6" y="-4.4" width="5.8" height="2.6"/><rect x="-3.6" y="-1.8" width="7" height="2.6"/><rect x="-2" y="0.8" width="6.6" height="2.6"/></g>
<circle cx="482.8" cy="70.4" r="1.9" fill="#3fcf4a"/>
<g transform="translate(498.00,66.20)" fill="none" stroke="#dde2e6" stroke-width="0.8" stroke-linejoin="round"><path d="M-4.4,-0.6l4.2,2l4.2,-2M-4.4,1.8l4.2,2l4.2,-2M5.2,-2.6v7.4h-5"/></g>
<path d="M493.8,63.4l4.2,-2.4l4.2,2.4l-4.2,2.4z" fill="#44e24c"/>
<g id="cab">
<polygon points="462.0,541.0 511.0,525.0 571.5,525.0 628.0,541.0 557.0,570.0" fill="#585856" />
<polygon points="571.5,524.0 628.0,539.5 626.0,544.0 571.5,528.5" fill="#8e8e8c" stroke="#2e2e2e" stroke-width="0.5" stroke-linejoin="round" />
<polygon points="466.0,537.0 511.0,525.0 511.0,530.0 468.0,542.0" fill="#8a8a88" stroke="#2e2e2e" stroke-width="0.5" stroke-linejoin="round" />
<polygon points="480.0,542.0 511.0,534.0 511.0,537.0 482.0,545.0" fill="#7a7a78" stroke="#2e2e2e" stroke-width="0.4" stroke-linejoin="round" />
<polygon points="538.8,136.0 588.7,138.0 558.4,525.0 508.7,530.0" fill="#8f8d8a" />
<polygon points="502.7,133.0 538.6,138.6 508.0,540.0 471.8,532.0" fill="#7f7d79" stroke="#262626" stroke-width="0.7" stroke-linejoin="round" />
<polygon points="639.5,150.0 660.8,150.0 625.8,522.0 606.2,526.4" fill="#d3d3d3" stroke="#3a3a3a" stroke-width="0.7" stroke-linejoin="round" />
<polygon points="629.5,223.0 634.5,223.0 612.0,462.0 607.5,462.0" fill="#7deaf7" stroke="#1e3c42" stroke-width="0.4" stroke-linejoin="round" />
<polygon points="664.6,152.7 703.0,159.0 667.3,511.9 630.0,519.0" fill="#d5d5d5" stroke="#8a8a8a" stroke-width="0.6" stroke-linejoin="round" />
<polygon points="665.5,174.0 683.5,176.0 682.7,212.0 661.7,211.0" fill="#6a6a6a" stroke="#444" stroke-width="0.5" stroke-linejoin="round" />
<line x1="666.3" y1="176.0" x2="682.8" y2="177.5" stroke="#333" stroke-width="0.8" />
<line x1="665.9111111111112" y1="179.88888888888889" x2="682.4111111111112" y2="181.38888888888889" stroke="#333" stroke-width="0.8" />
<line x1="665.5222222222222" y1="183.77777777777777" x2="682.0222222222222" y2="185.27777777777777" stroke="#333" stroke-width="0.8" />
<line x1="665.1333333333333" y1="187.66666666666666" x2="681.6333333333333" y2="189.16666666666666" stroke="#333" stroke-width="0.8" />
<line x1="664.7444444444444" y1="191.55555555555554" x2="681.2444444444444" y2="193.05555555555554" stroke="#333" stroke-width="0.8" />
<line x1="664.3555555555556" y1="195.44444444444446" x2="680.8555555555556" y2="196.94444444444446" stroke="#333" stroke-width="0.8" />
<line x1="663.9666666666667" y1="199.33333333333334" x2="680.4666666666667" y2="200.83333333333334" stroke="#333" stroke-width="0.8" />
<line x1="663.5777777777778" y1="203.22222222222223" x2="680.0777777777778" y2="204.72222222222223" stroke="#333" stroke-width="0.8" />
<line x1="663.1888888888889" y1="207.11111111111111" x2="679.6888888888889" y2="208.61111111111111" stroke="#333" stroke-width="0.8" />
<polygon points="636.0,468.0 654.0,470.0 653.2,507.0 632.1,506.0" fill="#6a6a6a" stroke="#444" stroke-width="0.5" stroke-linejoin="round" />
<line x1="636.8" y1="470.0" x2="653.3" y2="471.5" stroke="#333" stroke-width="0.8" />
<line x1="636.4" y1="474.0" x2="652.9" y2="475.5" stroke="#333" stroke-width="0.8" />
<line x1="636.0" y1="478.0" x2="652.5" y2="479.5" stroke="#333" stroke-width="0.8" />
<line x1="635.6" y1="482.0" x2="652.1" y2="483.5" stroke="#333" stroke-width="0.8" />
<line x1="635.2" y1="486.0" x2="651.7" y2="487.5" stroke="#333" stroke-width="0.8" />
<line x1="634.8" y1="490.0" x2="651.3" y2="491.5" stroke="#333" stroke-width="0.8" />
<line x1="634.4" y1="494.0" x2="650.9" y2="495.5" stroke="#333" stroke-width="0.8" />
<line x1="634.0" y1="498.0" x2="650.5" y2="499.5" stroke="#333" stroke-width="0.8" />
<line x1="633.6" y1="502.0" x2="650.1" y2="503.5" stroke="#333" stroke-width="0.8" />
<polygon points="660.0,239.5 671.5,241.0 671.0,257.0 659.0,256.0" fill="#4a4a4a" stroke="#222" stroke-width="0.5" stroke-linejoin="round" />
<rect x="662" y="243" width="6" height="9" fill="#777" />
<ellipse cx="664.5" cy="281.5" rx="3.6" ry="3.2" fill="#5a1e22"/>
<ellipse cx="659.5" cy="322" rx="6.4" ry="7.2" fill="#2e2a2a"/><ellipse cx="660.5" cy="322" rx="3.8" ry="4.2" fill="#7a1e24"/>
<polygon points="658.5,142.6 669.3,142.6 631.6,549.0 620.2,549.0" fill="#7c7c7a" stroke="#262626" stroke-width="0.8" stroke-linejoin="round" />
<line x1="661.4623224520309" y1="143" x2="623.219611263394" y2="549" stroke="#262626" stroke-width="0.6" />
<line x1="665.0623224520309" y1="143" x2="627.0196112633939" y2="549" stroke="#262626" stroke-width="0.6" />
<line x1="663.0623224520309" y1="143" x2="624.819611263394" y2="549" stroke="#959593" stroke-width="0.8" />
<line x1="667.0623224520309" y1="143" x2="629.0196112633939" y2="549" stroke="#959593" stroke-width="0.8" />
<polygon points="597.0,126.8 664.0,138.6 669.0,142.6 669.0,151.0 639.6,147.5 639.6,157.0 627.9,155.0 627.9,152.1 598.0,151.0" fill="#7c7c7a" stroke="#262626" stroke-width="0.6" stroke-linejoin="round" />
<line x1="598.5" y1="134.5" x2="627.9" y2="138.0" stroke="#262626" stroke-width="0.7" />
<line x1="598.5" y1="140" x2="627.9" y2="143.5" stroke="#262626" stroke-width="0.7" />
<line x1="598.5" y1="145.5" x2="627.9" y2="149.0" stroke="#262626" stroke-width="0.7" />
<polygon points="597.0,126.8 664.0,138.6 669.0,142.6 669.0,146.0 597.0,134.5" fill="#4e4e4c" stroke="#262626" stroke-width="0.6" stroke-linejoin="round" />
<line x1="598" y1="130.5" x2="666" y2="142.5" stroke="#7a7a78" stroke-width="0.6" />
<rect x="629.5" y="147" width="8.5" height="7" fill="#2e2e2e" />
<polygon points="489.4,121.4 594.0,125.0 598.0,127.0 589.6,140.5 539.5,136.2 538.6,138.8 502.7,133.3" fill="#7c7c7a" stroke="#262626" stroke-width="0.7" stroke-linejoin="round" />
<line x1="492" y1="124.6" x2="590" y2="130" stroke="#262626" stroke-width="0.7" />
<line x1="495" y1="128.5" x2="589.5" y2="134" stroke="#262626" stroke-width="0.6" />
<line x1="493" y1="126.5" x2="590" y2="132" stroke="#959593" stroke-width="0.8" />
<polygon points="489.4,121.4 502.7,133.0 471.8,532.0 459.0,542.4" fill="#7c7c7a" stroke="#262626" stroke-width="0.7" stroke-linejoin="round" />
<line x1="492.5" y1="124" x2="462.21942446043164" y2="538" stroke="#262626" stroke-width="0.7" />
<line x1="496.2226277372263" y1="124" x2="465.5" y2="538" stroke="#959593" stroke-width="1.0" />
<line x1="499.9548148148148" y1="124" x2="468.5725925925926" y2="538" stroke="#262626" stroke-width="0.7" />
<polygon points="539.5,135.8 581.0,140.8 580.5,153.5 539.0,148.0" fill="#7deaf7" stroke="#1e3c42" stroke-width="0.5" stroke-linejoin="round" />
<polygon points="580.5,139.0 589.5,140.0 589.0,150.0 580.0,149.0" fill="#3a3a3a" />
<polygon points="539.8,156.0 565.6,159.0 565.0,189.0 539.0,186.0" fill="#9e9c98" stroke="#3a3a3a" stroke-width="0.5" stroke-linejoin="round" />
<circle cx="552.5" cy="175.5" r="0.7" fill="#222"/><circle cx="547" cy="183" r="0.7" fill="#222"/>
<polygon points="564.0,159.6 586.0,162.0 585.2,188.0 563.5,186.0" fill="#707070" stroke="#1e1e1e" stroke-width="0.7" stroke-linejoin="round" />
<polygon points="567.0,161.0 572.0,161.6 571.5,186.0 566.5,185.5" fill="#3a3a3a" />
<polygon points="575.0,166.0 584.0,167.0 583.5,184.0 574.5,183.0" fill="#555" stroke="#222" stroke-width="0.4" stroke-linejoin="round" />
<line x1="575" y1="172" x2="584" y2="173" stroke="#222" stroke-width="0.5" />
<line x1="575" y1="178" x2="584" y2="179" stroke="#222" stroke-width="0.5" />
<polygon points="563.0,186.0 585.0,188.0 584.0,192.0 570.0,191.0 562.0,189.0" fill="#2a2a2a" />
<rect x="537.5" y="168" width="2.5" height="6" fill="#b9a030" />
<polygon points="539.0,191.0 584.0,196.0 583.5,200.0 538.5,195.0" fill="#8a8884" />
<polygon points="535.7,196.6 583.0,202.3 582.5,208.0 534.7,202.3" fill="#7deaf7" stroke="#1e3c42" stroke-width="0.5" stroke-linejoin="round" />
<polygon points="534.5,208.0 582.0,213.0 581.0,238.0 533.0,233.0" fill="#9a9893" stroke="#444" stroke-width="0.4" stroke-linejoin="round" />
<polygon points="536.0,214.0 548.0,215.5 547.5,229.0 535.5,228.0" fill="#a8a6a2" stroke="#333" stroke-width="0.5" stroke-linejoin="round" />
<polygon points="561.0,217.0 576.0,218.5 575.5,233.0 560.5,231.5" fill="#a8a6a2" stroke="#333" stroke-width="0.5" stroke-linejoin="round" />
<path d="M547,216 L561,230 M561,217 L547,230" stroke="#1e1e1e" stroke-width="3.2"/>
<ellipse cx="554" cy="223.5" rx="4" ry="4.5" fill="#222"/>
<rect x="533.5" y="219" width="2.6" height="6.5" fill="#c8a830" />
<rect x="579" y="222" width="2.6" height="6.5" fill="#c8a830" />
<polygon points="532.5,237.5 581.0,243.0 580.5,250.0 532.0,244.5" fill="#7deaf7" stroke="#1e3c42" stroke-width="0.5" stroke-linejoin="round" />
<polygon points="530.5,245.0 544.1,245.0 533.2,430.0 516.4,430.0" fill="#7deaf7" stroke="#141414" stroke-width="0.9" stroke-linejoin="round" stroke-dasharray="1.8,0.7"/>
<polygon points="544.8,246.0 548.8,246.0 537.8,430.0 534.0,430.0" fill="#7deaf7" stroke="#1e3c42" stroke-width="0.5" stroke-linejoin="round" />
<polygon points="548.8,250.0 579.8,252.0 573.2,336.0 543.7,336.0" fill="#8f8d8a" />
<polygon points="549.0,248.0 578.0,251.0 577.0,274.0 548.0,271.0" fill="#353535" />
<rect x="553" y="252" width="10" height="8" fill="#555" />
<rect x="566" y="256" width="5" height="12" fill="#606060" />
<rect x="574" y="255" width="3" height="7" fill="#c8a830" />
<polygon points="547.5,274.5 578.0,277.0 577.5,284.0 547.0,281.5" fill="#7deaf7" stroke="#1e3c42" stroke-width="0.5" stroke-linejoin="round" />
<polygon points="545.0,284.0 577.0,287.0 576.0,306.0 544.0,304.0" fill="#262626" />
<rect x="547.0" y="288" width="3" height="2.5" fill="#d9d9d9" />
<rect x="547.5" y="293" width="2.6" height="2" fill="#b0b0b0" />
<rect x="547.0" y="298" width="3" height="2.5" fill="#d0d0d0" />
<rect x="551.6" y="288" width="3" height="2.5" fill="#d9d9d9" />
<rect x="552.1" y="293" width="2.6" height="2" fill="#b0b0b0" />
<rect x="551.6" y="298" width="3" height="2.5" fill="#d0d0d0" />
<rect x="556.2" y="288" width="3" height="2.5" fill="#d9d9d9" />
<rect x="556.7" y="293" width="2.6" height="2" fill="#b0b0b0" />
<rect x="556.2" y="298" width="3" height="2.5" fill="#d0d0d0" />
<rect x="560.8" y="288" width="3" height="2.5" fill="#d9d9d9" />
<rect x="561.3" y="293" width="2.6" height="2" fill="#b0b0b0" />
<rect x="560.8" y="298" width="3" height="2.5" fill="#d0d0d0" />
<rect x="565.4" y="288" width="3" height="2.5" fill="#d9d9d9" />
<rect x="565.9" y="293" width="2.6" height="2" fill="#b0b0b0" />
<rect x="565.4" y="298" width="3" height="2.5" fill="#d0d0d0" />
<rect x="570.0" y="288" width="3" height="2.5" fill="#d9d9d9" />
<rect x="570.5" y="293" width="2.6" height="2" fill="#b0b0b0" />
<rect x="570.0" y="298" width="3" height="2.5" fill="#d0d0d0" />
<polygon points="544.0,306.0 575.5,309.0 575.0,314.0 543.5,311.0" fill="#a8a6a2" />
<polygon points="543.5,314.0 575.0,317.0 574.5,321.0 543.0,318.0" fill="#7deaf7" stroke="#1e3c42" stroke-width="0.4" stroke-linejoin="round" />
<polygon points="543.0,321.5 574.5,324.5 574.2,328.0 542.8,325.0" fill="#7deaf7" stroke="#1e3c42" stroke-width="0.4" stroke-linejoin="round" />
<polygon points="542.0,327.8 574.0,331.0 573.5,337.0 541.5,334.0" fill="#3a3a3a" />
<polygon points="596.0,148.0 606.5,149.5 606.5,158.5 618.5,159.5 605.6,340.0 585.0,340.0 586.0,200.0" fill="#7deaf7" stroke="#141414" stroke-width="0.9" stroke-linejoin="round" stroke-dasharray="1.8,0.7"/>
<line x1="612" y1="162" x2="600" y2="338" stroke="#1e3c42" stroke-width="0.6" />
<line x1="596.9" y1="176" x2="611.9" y2="177.5" stroke="#1a1a1a" stroke-width="0.7" />
<line x1="594.9" y1="204" x2="609.9" y2="205.5" stroke="#1a1a1a" stroke-width="0.7" />
<line x1="593.4" y1="226" x2="608.4" y2="227.5" stroke="#1a1a1a" stroke-width="0.7" />
<line x1="592.0" y1="246" x2="607.0" y2="247.5" stroke="#1a1a1a" stroke-width="0.7" />
<line x1="590.4" y1="268" x2="605.4" y2="269.5" stroke="#1a1a1a" stroke-width="0.7" />
<line x1="589.0" y1="288" x2="604.0" y2="289.5" stroke="#1a1a1a" stroke-width="0.7" />
<line x1="587.5" y1="310" x2="602.5" y2="311.5" stroke="#1a1a1a" stroke-width="0.7" />
<line x1="586.4" y1="326" x2="601.4" y2="327.5" stroke="#1a1a1a" stroke-width="0.7" />
<polygon points="597.0,166.0 616.0,168.0 614.0,193.0 595.0,191.0" fill="#2e2e2e" />
<rect x="604" y="170" width="3" height="20" fill="#555" />
<rect x="609" y="171" width="3" height="18" fill="#4a4a4a" />
<polygon points="591.0,214.0 603.0,216.0 602.0,234.0 590.0,232.0" fill="#333" />
<polygon points="588.0,250.0 597.0,251.0 596.0,269.0 587.0,268.0" fill="#2c2c2c" />
<polygon points="586.0,282.0 600.0,284.0 599.0,304.0 585.0,302.0" fill="#2f2f2f" />
<polygon points="596.0,196.0 612.0,198.0 611.5,200.0 595.5,198.0" fill="#1e3c42" />
<polygon points="593.0,238.0 609.0,240.0 608.5,242.0 592.5,240.0" fill="#1e3c42" />
<polygon points="542.7,336.8 571.0,340.7 565.0,422.0 537.5,417.0" fill="#a3a2a0" stroke="#333" stroke-width="0.6" stroke-linejoin="round" />
<polygon points="577.6,333.0 611.2,344.6 607.3,418.3 577.6,417.0" fill="#4b4e53" stroke="#222" stroke-width="0.6" stroke-linejoin="round" />
<polygon points="579.0,353.6 585.0,354.5 585.0,390.0 579.0,389.0" fill="#6c6f73" />
<polygon points="597.0,346.0 606.0,347.5 603.0,408.0 594.0,407.0" fill="#7a8a96" />
<polygon points="594.4,393.7 600.9,394.5 600.2,406.7 593.8,406.0" fill="#c9b43a" />
<polygon points="607.0,345.0 614.0,347.0 611.0,417.0 605.0,418.0" fill="#8e8c88" />
<polygon points="515.5,423.5 585.4,428.0 585.0,436.4 515.0,431.5" fill="#7deaf7" stroke="#1e3c42" stroke-width="0.5" stroke-linejoin="round" />
<polygon points="513.0,434.0 582.8,438.0 582.0,465.0 512.0,461.0" fill="#8f8d8a" stroke="#555" stroke-width="0.4" stroke-linejoin="round" />
<rect x="518" y="444" width="8" height="9" fill="#2f2f2f" />
<rect x="527" y="446" width="5" height="8" fill="#d8d8d8" />
<rect x="533" y="443" width="8" height="12" fill="#2a2a2a" />
<rect x="542" y="445" width="4" height="8" fill="#c8b030" />
<rect x="547" y="442" width="12" height="13" fill="#2e2e2e" />
<rect x="560" y="444" width="4" height="9" fill="#d0d0d0" />
<rect x="565" y="441" width="12" height="16" fill="#2b2b2b" />
<polygon points="511.6,465.0 582.8,469.0 582.5,480.0 511.0,476.0" fill="#7deaf7" stroke="#1e3c42" stroke-width="0.5" stroke-linejoin="round" />
<line x1="512" y1="470.5" x2="583" y2="474.5" stroke="#1e3c42" stroke-width="0.5" />
<polygon points="575.0,422.0 593.0,424.0 590.0,480.0 572.0,478.0" fill="#7deaf7" stroke="#1e3c42" stroke-width="0.4" stroke-linejoin="round" />
<polygon points="512.4,480.2 581.5,470.0 583.0,475.8 513.8,489.0" fill="#7deaf7" stroke="#1e3c42" stroke-width="0.6" stroke-linejoin="round" />
<polygon points="511.6,489.0 568.0,480.0 568.0,503.0 511.6,511.0" fill="#1f1f1f" />
<line x1="524.0" y1="487.5" x2="524.0" y2="508.5" stroke="#4a4a4a" stroke-width="0.7" />
<line x1="528.2" y1="487.5" x2="528.2" y2="508.5" stroke="#4a4a4a" stroke-width="0.7" />
<line x1="532.4" y1="487.5" x2="532.4" y2="508.5" stroke="#4a4a4a" stroke-width="0.7" />
<line x1="536.6" y1="487.5" x2="536.6" y2="508.5" stroke="#4a4a4a" stroke-width="0.7" />
<line x1="540.8" y1="487.5" x2="540.8" y2="508.5" stroke="#4a4a4a" stroke-width="0.7" />
<line x1="545.0" y1="487.5" x2="545.0" y2="508.5" stroke="#4a4a4a" stroke-width="0.7" />
<line x1="549.2" y1="487.5" x2="549.2" y2="508.5" stroke="#4a4a4a" stroke-width="0.7" />
<line x1="553.4" y1="487.5" x2="553.4" y2="508.5" stroke="#4a4a4a" stroke-width="0.7" />
<line x1="557.6" y1="487.5" x2="557.6" y2="508.5" stroke="#4a4a4a" stroke-width="0.7" />
<line x1="561.8" y1="487.5" x2="561.8" y2="508.5" stroke="#4a4a4a" stroke-width="0.7" />
<line x1="524" y1="493" x2="566" y2="487" stroke="#3c3c3c" stroke-width="0.6" />
<line x1="524" y1="498" x2="566" y2="492" stroke="#3c3c3c" stroke-width="0.6" />
<line x1="524" y1="503" x2="566" y2="497" stroke="#3c3c3c" stroke-width="0.6" />
<polygon points="511.6,489.0 523.3,487.3 523.3,509.5 511.6,511.0" fill="#9c9c9c" stroke="#333" stroke-width="0.4" stroke-linejoin="round" />
<polygon points="575.7,470.0 590.0,470.0 590.0,497.7 575.7,500.0" fill="#7deaf7" stroke="#1e3c42" stroke-width="0.6" stroke-linejoin="round" />
<polygon points="508.7,511.0 575.5,499.0 575.5,515.0 508.7,532.6" fill="#7deaf7" stroke="#1e3c42" stroke-width="0.6" stroke-linejoin="round" />
<line x1="511" y1="511.5" x2="578.6" y2="498.5" stroke="#1e3c42" stroke-width="0.6" />
<polygon points="506.5,532.0 572.8,518.0 572.8,528.2 506.5,547.0" fill="#a3a19e" stroke="#3a3a3a" stroke-width="0.5" stroke-linejoin="round" />
<polygon points="508.7,528.0 585.9,513.5 584.5,516.5 510.0,534.8" fill="#7deaf7" stroke="#1e3c42" stroke-width="0.6" stroke-linejoin="round" />
<polygon points="589.6,126.6 598.1,126.6 561.9,573.0 554.6,573.0" fill="#7c7c7a" stroke="#262626" stroke-width="0.7" stroke-linejoin="round" />
<line x1="592.5686379928316" y1="127" x2="557.2784050179212" y2="572" stroke="#959593" stroke-width="1.0" />
<line x1="595.0686379928316" y1="127" x2="559.4784050179211" y2="572" stroke="#262626" stroke-width="0.6" />
<polygon points="459.0,540.0 470.5,540.5 556.0,566.0 562.0,567.0 562.0,575.0 556.0,577.0 464.4,547.0" fill="#7c7c7a" stroke="#262626" stroke-width="0.6" stroke-linejoin="round" />
<line x1="465" y1="543.5" x2="556" y2="571" stroke="#959593" stroke-width="0.9" />
<polygon points="562.0,567.0 626.0,541.0 632.0,543.0 632.0,549.0 626.0,550.0 562.0,575.0" fill="#7c7c7a" stroke="#262626" stroke-width="0.6" stroke-linejoin="round" />
<line x1="562" y1="571" x2="628" y2="545.5" stroke="#959593" stroke-width="0.9" />
<ellipse cx="500.3" cy="120.8" rx="2.2" ry="1.8" fill="#2a2a2a"/>
<ellipse cx="594.2" cy="124.6" rx="2.2" ry="1.8" fill="#2a2a2a"/>
<ellipse cx="664" cy="139.2" rx="2.2" ry="1.8" fill="#2a2a2a"/>
<ellipse cx="557" cy="576" rx="2.6" ry="1.8" fill="#555"/>
<ellipse cx="627" cy="549.5" rx="2" ry="1.4" fill="#555"/>
<path d="M549.5,153.8 A5.6,5.6 0 1 0 553,152.2" fill="none" stroke="#ffffff" stroke-width="1.1"/>
<path d="M547.6,151.8l3.6,-0.6l-1.2,3.4z" fill="#ffffff"/>
</g>
<g opacity="0.18" fill="none" stroke="#ffffff" stroke-width="3">
<rect x="488" y="416" width="54" height="60" rx="18"/><rect x="498" y="426" width="34" height="40" rx="11"/>
</g>
<text x="594" y="477" font-size="84" font-weight="bold" fill="#ffffff" opacity="0.15" textLength="152" lengthAdjust="spacingAndGlyphs">TSC</text>
<ellipse cx="970" cy="135.6" rx="24.5" ry="6.3" fill="none" stroke="#bdbdbd" stroke-width="2.2"/>
<path d="M946.5,133 a24,6.6 0 0 0 8,7 l1,-2.4 a20,5 0 0 1 -5,-5.4z" fill="#b3b3b3"/>
<path d="M946,136 a24,6 0 0 0 5,3.6" stroke="#444" stroke-width="1.2" fill="none"/>
<path d="M990,138.8 a24,6 0 0 0 4,-2" stroke="#555" stroke-width="1" fill="none"/>
<polygon points="956.1,113.7 974.7,115.9 972.9,140 954.3,134.9" fill="#0a0a0a"/>
<polygon points="974.7,115.9 985.6,116.3 983.1,134.9 972.9,140" fill="#0a0a0a"/>
<line x1="974.6" y1="116.5" x2="972.9" y2="139.5" stroke="#e8e8e8" stroke-width="0.5" />
<text x="959" y="129.8" font-size="5.4" fill="#e6e6e6" font-weight="bold" textLength="10.5" lengthAdjust="spacingAndGlyphs" transform="rotate(5 964 128)">LEFT</text>
<text x="975.5" y="129.5" font-size="5" fill="#e6e6e6" font-weight="bold" textLength="7" lengthAdjust="spacingAndGlyphs" transform="rotate(-8 979 128)">FRO</text>
<path d="M986.7,277.2 L992.5,271.4 L998.3,277.2 M988.3,275.6 v6.4 h3 v-3.8 h2.4 v3.8 h3 v-6.4" fill="none" stroke="#1a1a1a" stroke-width="1.3" stroke-linejoin="round"/>
<circle cx="992.5" cy="297.3" r="5.6" fill="none" stroke="#1a1a1a" stroke-width="1.3"/>
<path d="M987.7,296.4 Q992.5,292.8 997.3,296.4 Q992.5,302 987.7,296.4z" fill="#1a1a1a"/>
<circle cx="991.5" cy="317.3" r="4" fill="none" stroke="#1a1a1a" stroke-width="1.4"/><path d="M994.4,320.2 l3.8,3.8" stroke="#1a1a1a" stroke-width="1.8"/>
<path d="M986.5,339.3 h12 M992.5,333.3 v12" stroke="#1a1a1a" stroke-width="1.2"/>
<path d="M986.1,339.3 l2.4,-2.2 v4.4z M998.9,339.3 l-2.4,-2.2 v4.4z M992.5,332.9 l-2.2,2.4 h4.4z M992.5,345.7 l-2.2,-2.4 h4.4z" fill="#1a1a1a"/>
<rect x="983.2" y="352.7" width="18" height="17.5" fill="#f07ab6" />
<path d="M988.9,357 A5,5 0 1 0 993.1,355.6" fill="none" stroke="#1a1a1a" stroke-width="1.3"/>
<path d="M986.9,354 l4.2,0.4 l-1.8,3.8z" fill="#1a1a1a"/>
<path d="M987.3,377.29999999999995 l2.4,2.4" stroke="#1a1a1a" stroke-width="1.1"/>
<path d="M987.3,377.29999999999995 h2.2 M987.3,377.29999999999995 v2.2" stroke="#1a1a1a" stroke-width="1.1"/>
<path d="M997.7,377.29999999999995 l-2.4,2.4" stroke="#1a1a1a" stroke-width="1.1"/>
<path d="M997.7,377.29999999999995 h-2.2 M997.7,377.29999999999995 v2.2" stroke="#1a1a1a" stroke-width="1.1"/>
<path d="M987.3,386.5 l2.4,-2.4" stroke="#1a1a1a" stroke-width="1.1"/>
<path d="M987.3,386.5 h2.2 M987.3,386.5 v-2.2" stroke="#1a1a1a" stroke-width="1.1"/>
<path d="M997.7,386.5 l-2.4,-2.4" stroke="#1a1a1a" stroke-width="1.1"/>
<path d="M997.7,386.5 h-2.2 M997.7,386.5 v-2.2" stroke="#1a1a1a" stroke-width="1.1"/>
<rect x="987.9" y="397.6" width="9.2" height="10.6" fill="#1a1a1a"/><rect x="989.9" y="399.2" width="5.2" height="2.8" fill="#f4f4f4"/><rect x="989.7" y="403.6" width="5.6" height="3.2" fill="#f4f4f4"/>
<path d="M988.7,418.4 h7.4 v12.4 h-7.4z M988.7,418.4 l4,2.4 v11.6 l-4,-1.6" fill="none" stroke="#1a1a1a" stroke-width="1.3" stroke-linejoin="round"/>
<text transform="translate(1019.6,115) rotate(-90)" font-size="6.8" fill="#d9e0e8" textLength="8.5" lengthAdjust="spacingAndGlyphs">Ma</text>
<g fill="none" stroke="#d9e0e8" stroke-width="0.6"><rect x="1014.8" y="119" width="5.2" height="6"/><path d="M1014.8,121h5.2M1014.8,123h5.2M1017.4,119v6"/></g>
<text transform="translate(1019.5,182.2) rotate(-90)" font-size="6.6" fill="#d9e0e8" textLength="50.7" lengthAdjust="spacingAndGlyphs">Material-Explorer</text>
<g fill="none" stroke="#d9e0e8" stroke-width="0.6"><rect x="1014.8" y="185" width="4.6" height="4.8"/><path d="M1014.8,187.4h4.6"/></g>
<text transform="translate(1019.5,247) rotate(-90)" font-size="6.6" fill="#d9e0e8" textLength="47" lengthAdjust="spacingAndGlyphs">Symbol-Explorer</text>
<g fill="none" stroke="#d9e0e8" stroke-width="0.6"><rect x="1014.8" y="249.5" width="4.6" height="4.8"/></g>
</svg></body></html>
